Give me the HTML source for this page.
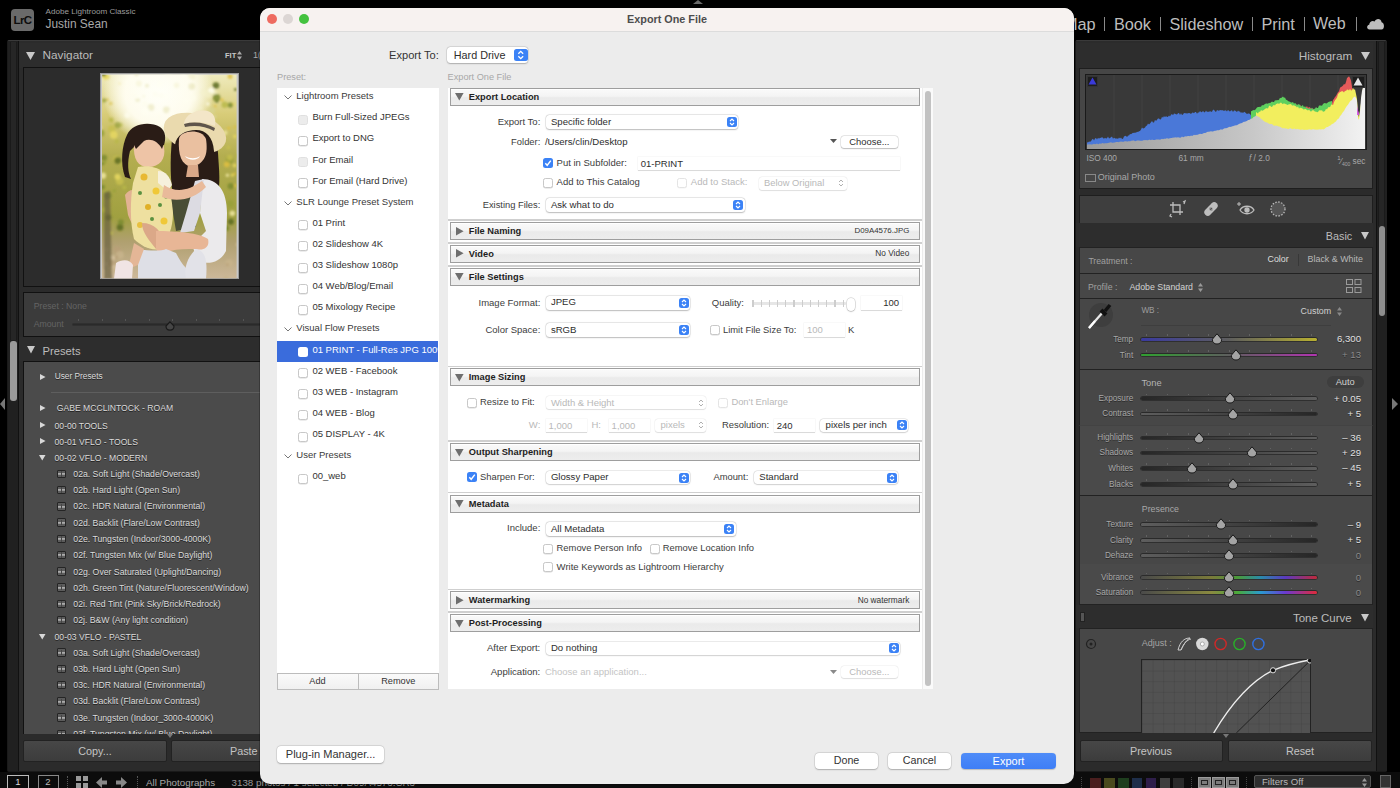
<!DOCTYPE html>
<html><head><meta charset="utf-8">
<style>
*{margin:0;padding:0;box-sizing:border-box}
html,body{width:1400px;height:788px;overflow:hidden;background:#000;font-family:"Liberation Sans",sans-serif;position:relative}
.a{position:absolute}
.t{position:absolute;white-space:nowrap}
.sh{text-shadow:0 1px 1px rgba(0,0,0,.6)}
</style></head><body>
<div class="a" style="left:11px;top:9px;width:23px;height:22px;background:#6a6a6a;border-radius:4px"></div>
<div class="t" style="left:11.0px;width:23px;text-align:center;top:13.03px;font-size:11.5px;line-height:14.95px;color:#0e0e0e;font-weight:bold;letter-spacing:-0.6px">LrC</div>
<div class="t" style="left:45.5px;top:7.43px;font-size:8.1px;line-height:10.53px;color:#9c9c9c;font-weight:normal;">Adobe Lightroom Classic</div>
<div class="t" style="left:45.5px;top:17.27px;font-size:11.9px;line-height:15.47px;color:#a8a8a8;font-weight:normal;">Justin Sean</div>
<div class="t" style="left:1064px;top:13.90px;font-size:16.3px;line-height:21.19px;color:#bdbdbd;font-weight:normal;">Map</div>
<div class="a" style="left:1104.4px;top:17px;width:1px;height:14px;background:#8a8a8a"></div>
<div class="a" style="left:1159.9px;top:17px;width:1px;height:14px;background:#8a8a8a"></div>
<div class="a" style="left:1251.9px;top:17px;width:1px;height:14px;background:#8a8a8a"></div>
<div class="a" style="left:1303.6px;top:17px;width:1px;height:14px;background:#8a8a8a"></div>
<div class="a" style="left:1355.6px;top:17px;width:1px;height:14px;background:#8a8a8a"></div>
<div class="t" style="left:1113.9px;top:13.90px;font-size:16.3px;line-height:21.19px;color:#bdbdbd;font-weight:normal;">Book</div>
<div class="t" style="left:1169.4px;top:13.97px;font-size:16.2px;line-height:21.06px;color:#bdbdbd;font-weight:normal;">Slideshow</div>
<div class="t" style="left:1261.4px;top:13.90px;font-size:16.3px;line-height:21.19px;color:#bdbdbd;font-weight:normal;">Print</div>
<div class="t" style="left:1313px;top:14.10px;font-size:16.0px;line-height:20.8px;color:#bdbdbd;font-weight:normal;">Web</div>
<svg class="a" style="left:1366px;top:17px" width="19" height="13" viewBox="0 0 19 13"><path d="M3.5 12.5 C0.5 12.5 0.3 8.2 3.2 7.8 C3.4 4.6 6.6 3.2 8.6 4.6 C9.8 1 15 1 15.6 5.2 C18.6 5.6 19 12.5 15.5 12.5 Z" fill="#bdbdbd"/></svg>
<svg class="a" style="left:693px;top:0px" width="10" height="4"><path d="M0 4 L5 0 L10 4Z" fill="#6a6a6a"/></svg>
<div class="a" style="left:7px;top:40px;width:264px;height:732px;background:#2b2b2b;border:1px solid #1a1a1a;border-top-color:#3a3a3a;border-radius:2px"></div>
<div class="a" style="left:8px;top:41px;width:11px;height:730px;background:#202020;border-right:1px solid #111"></div>
<div class="a" style="left:10px;top:42px;width:7px;height:298px;background:#262626;border-left:1px solid #1a1a1a;border-right:1px solid #1a1a1a"></div>
<div class="a" style="left:10px;top:341px;width:7px;height:60px;background:#9a9a9a;border-radius:3px"></div>
<svg class="a" style="left:0px;top:398px" width="5" height="12"><path d="M5 0 L0 6 L5 12Z" fill="#777"/></svg>
<div class="a" style="left:19px;top:43px;width:252px;height:25px;background:#2d2d2d"></div>
<svg class="a" style="left:26px;top:52px" width="9" height="8"><path d="M0 0 L9 0 L4.5 8Z" fill="#c8c8c8"/></svg>
<div class="t" style="left:42.5px;top:48.33px;font-size:11.8px;line-height:15.34px;color:#bcbcbc;font-weight:normal;">Navigator</div>
<div class="t" style="left:225px;top:50.92px;font-size:7.5px;line-height:9.75px;color:#c8c8c8;font-weight:bold;">FIT</div>
<svg class="a" style="left:237px;top:51px" width="5" height="9"><path d="M0 3.5 L2.5 0 L5 3.5Z M0 5.5 L2.5 9 L5 5.5Z" fill="#aaa"/></svg>
<div class="t" style="left:253px;top:50.15px;font-size:9px;line-height:11.7px;color:#aaa;font-weight:normal;">1(</div>
<div class="a" style="left:23px;top:67px;width:248px;height:220px;background:#2c2c2c;border:1px solid #111;border-right:none"></div>
<svg class="a" style="left:100px;top:73px" width="139" height="206" viewBox="0 0 139 206">
<defs>
<linearGradient id="pbg" x1="0" y1="0" x2="0" y2="1">
<stop offset="0" stop-color="#f0ecc0"/><stop offset="0.2" stop-color="#d8cc78"/><stop offset="0.4" stop-color="#b4ae50"/><stop offset="0.7" stop-color="#a0a040"/><stop offset="0.82" stop-color="#b0a070"/><stop offset="1" stop-color="#cdb89a"/></linearGradient>
<radialGradient id="pglow" cx="0.42" cy="0.1" r="0.4" gradientTransform="translate(0.42 0.1) scale(1 0.62) translate(-0.42 -0.1)"><stop offset="0" stop-color="#fffff8"/><stop offset="0.6" stop-color="#fffdf0" stop-opacity="0.95"/><stop offset="1" stop-color="#fffcec" stop-opacity="0"/></radialGradient>
<filter id="pb" x="-5%" y="-5%" width="110%" height="110%"><feGaussianBlur stdDeviation="0.6"/></filter>
<filter id="pb2"><feGaussianBlur stdDeviation="0.9"/></filter>
<clipPath id="pc"><rect x="2" y="1.8" width="134.6" height="203.4"/></clipPath>
</defs>
<rect x="0" y="0" width="139" height="206" fill="#9c9c9c"/>
<rect x="1" y="1" width="137" height="204" fill="#c8c8c8"/>
<g clip-path="url(#pc)">
<rect x="0" y="0" width="139" height="206" fill="url(#pbg)"/>
<rect x="0" y="0" width="139" height="206" fill="url(#pglow)"/>
<g filter="url(#pb2)"><circle cx="45.0" cy="31.1" r="3.0" fill="#fdfbe8" opacity="0.85"/><circle cx="114.2" cy="19.4" r="2.8" fill="#f0ecc0" opacity="0.85"/><circle cx="5.2" cy="89.3" r="1.4" fill="#98a038" opacity="0.85"/><circle cx="76.6" cy="12.2" r="2.8" fill="#f0ecc0" opacity="0.85"/><circle cx="8.6" cy="120.6" r="1.3" fill="#e8d860" opacity="0.85"/><circle cx="6.5" cy="176.8" r="2.0" fill="#c8b48c" opacity="0.85"/><circle cx="14.3" cy="117.7" r="1.7" fill="#98a038" opacity="0.85"/><circle cx="76.1" cy="12.9" r="1.4" fill="#f0ecc0" opacity="0.85"/><circle cx="128.4" cy="74.5" r="1.9" fill="#c8c050" opacity="0.85"/><circle cx="16.4" cy="86.1" r="3.3" fill="#c8c050" opacity="0.85"/><circle cx="129.7" cy="86.9" r="3.9" fill="#98a038" opacity="0.85"/><circle cx="8.4" cy="144.5" r="3.0" fill="#5a6a20" opacity="0.85"/><circle cx="92.9" cy="4.6" r="2.5" fill="#f0ecc0" opacity="0.85"/><circle cx="127.4" cy="102.3" r="1.7" fill="#f0e8a0" opacity="0.85"/><circle cx="133.1" cy="31.1" r="1.7" fill="#e8d860" opacity="0.85"/><circle cx="91.5" cy="2.5" r="3.5" fill="#f0ecc0" opacity="0.85"/><circle cx="36.5" cy="0.8" r="2.4" fill="#d8d490" opacity="0.85"/><circle cx="17.4" cy="177.0" r="3.9" fill="#b8a078" opacity="0.85"/><circle cx="132.3" cy="140.2" r="2.8" fill="#f0e8a0" opacity="0.85"/><circle cx="55.5" cy="21.3" r="3.0" fill="#fdfbe8" opacity="0.85"/><circle cx="61.2" cy="22.6" r="2.9" fill="#fdfbe8" opacity="0.85"/><circle cx="0.0" cy="31.2" r="1.5" fill="#b8b848" opacity="0.85"/><circle cx="85.3" cy="14.5" r="1.8" fill="#fffff0" opacity="0.85"/><circle cx="20.6" cy="52.0" r="2.2" fill="#b8b848" opacity="0.85"/><circle cx="65.9" cy="23.8" r="2.6" fill="#fffff0" opacity="0.85"/><circle cx="20.0" cy="154.4" r="3.3" fill="#5a6a20" opacity="0.85"/><circle cx="115.2" cy="33.3" r="1.3" fill="#e0c040" opacity="0.85"/><circle cx="127.1" cy="156.2" r="2.0" fill="#98a038" opacity="0.85"/><circle cx="51.0" cy="34.4" r="3.4" fill="#d8d490" opacity="0.85"/><circle cx="135.5" cy="16.6" r="1.5" fill="#5a6a20" opacity="0.85"/><circle cx="27.3" cy="42.1" r="2.9" fill="#fdfbe8" opacity="0.85"/><circle cx="111.2" cy="17.5" r="3.0" fill="#fffff0" opacity="0.85"/><circle cx="66.4" cy="36.8" r="3.4" fill="#d8d490" opacity="0.85"/><circle cx="12.1" cy="194.9" r="3.2" fill="#d8c4a0" opacity="0.85"/><circle cx="100.7" cy="35.0" r="1.6" fill="#f0ecc0" opacity="0.85"/><circle cx="130.3" cy="32.1" r="2.7" fill="#7a8a30" opacity="0.85"/><circle cx="2.0" cy="200.0" r="3.0" fill="#c8b48c" opacity="0.85"/><circle cx="114.8" cy="43.5" r="1.9" fill="#d8d490" opacity="0.85"/><circle cx="116.0" cy="12.5" r="3.3" fill="#5a6a20" opacity="0.85"/><circle cx="122.1" cy="26.9" r="1.6" fill="#e0c040" opacity="0.85"/><circle cx="2.6" cy="90.7" r="1.7" fill="#7a8a30" opacity="0.85"/><circle cx="107.9" cy="30.9" r="1.6" fill="#fdfbe8" opacity="0.85"/><circle cx="109.0" cy="21.9" r="2.8" fill="#f0ecc0" opacity="0.85"/><circle cx="26.6" cy="8.7" r="1.5" fill="#fffff0" opacity="0.85"/><circle cx="126.8" cy="91.3" r="2.9" fill="#e0c040" opacity="0.85"/><circle cx="84.3" cy="41.1" r="2.0" fill="#fffff0" opacity="0.85"/><circle cx="129.0" cy="190.1" r="3.7" fill="#c8b48c" opacity="0.85"/><circle cx="116.8" cy="28.2" r="1.5" fill="#5a6a20" opacity="0.85"/><circle cx="59.5" cy="43.8" r="2.0" fill="#fdfbe8" opacity="0.85"/><circle cx="124.7" cy="31.8" r="3.2" fill="#b8b848" opacity="0.85"/><circle cx="19.9" cy="181.9" r="3.9" fill="#c8b48c" opacity="0.85"/><circle cx="103.8" cy="19.4" r="3.7" fill="#f0ecc0" opacity="0.85"/><circle cx="137.6" cy="171.5" r="1.7" fill="#d8c4a0" opacity="0.85"/><circle cx="138.2" cy="83.2" r="2.4" fill="#b8b848" opacity="0.85"/><circle cx="2.7" cy="114.1" r="2.4" fill="#7a8a30" opacity="0.85"/><circle cx="15.7" cy="189.2" r="1.8" fill="#b8a078" opacity="0.85"/><circle cx="11.7" cy="56.0" r="3.7" fill="#c8c050" opacity="0.85"/><circle cx="37.6" cy="26.7" r="2.4" fill="#d8d490" opacity="0.85"/><circle cx="111.1" cy="37.8" r="3.7" fill="#d8d490" opacity="0.85"/><circle cx="130.4" cy="130.7" r="3.4" fill="#98a038" opacity="0.85"/><circle cx="36.8" cy="25.1" r="1.2" fill="#fffff0" opacity="0.85"/><circle cx="128.8" cy="55.2" r="1.6" fill="#e0c040" opacity="0.85"/><circle cx="134.7" cy="54.0" r="1.7" fill="#d8c048" opacity="0.85"/><circle cx="5.1" cy="3.8" r="2.6" fill="#e8d860" opacity="0.85"/><circle cx="134.9" cy="63.4" r="1.8" fill="#e8d860" opacity="0.85"/><circle cx="7.6" cy="26.7" r="1.4" fill="#d8c048" opacity="0.85"/><circle cx="59.9" cy="11.4" r="3.1" fill="#fffff0" opacity="0.85"/><circle cx="21.9" cy="91.8" r="1.9" fill="#b8b848" opacity="0.85"/><circle cx="135.2" cy="112.7" r="1.9" fill="#d8c048" opacity="0.85"/><circle cx="30.3" cy="37.7" r="2.1" fill="#fdfbe8" opacity="0.85"/><circle cx="0.7" cy="54.4" r="1.5" fill="#f0e8a0" opacity="0.85"/><circle cx="11.7" cy="197.3" r="3.6" fill="#c8b48c" opacity="0.85"/><circle cx="20.8" cy="149.2" r="3.0" fill="#7a8a30" opacity="0.85"/><circle cx="126.5" cy="155.1" r="2.8" fill="#7a8a30" opacity="0.85"/><circle cx="4.3" cy="27.4" r="2.2" fill="#98a038" opacity="0.85"/><circle cx="7.1" cy="3.9" r="2.7" fill="#e8d860" opacity="0.85"/><circle cx="68.0" cy="0.7" r="3.4" fill="#fdfbe8" opacity="0.85"/><circle cx="91.6" cy="13.6" r="3.3" fill="#d8d490" opacity="0.85"/><circle cx="10.7" cy="187.6" r="2.0" fill="#b8a078" opacity="0.85"/><circle cx="10.8" cy="30.4" r="1.9" fill="#d8c048" opacity="0.85"/><circle cx="86.3" cy="27.5" r="2.6" fill="#fffff0" opacity="0.85"/><circle cx="16.5" cy="184.1" r="1.8" fill="#b8a078" opacity="0.85"/><circle cx="130.1" cy="3.6" r="2.5" fill="#e0c040" opacity="0.85"/><circle cx="134.6" cy="92.6" r="2.0" fill="#e8d860" opacity="0.85"/><circle cx="127.4" cy="191.7" r="1.4" fill="#b8a078" opacity="0.85"/><circle cx="19.7" cy="108.0" r="3.9" fill="#c8c050" opacity="0.85"/><circle cx="38.9" cy="23.2" r="2.2" fill="#fffff0" opacity="0.85"/><circle cx="3.5" cy="0.7" r="2.6" fill="#5a6a20" opacity="0.85"/><circle cx="16.8" cy="68.3" r="2.1" fill="#b8b848" opacity="0.85"/><circle cx="116.6" cy="24.7" r="3.8" fill="#7a8a30" opacity="0.85"/><circle cx="125.3" cy="59.7" r="2.2" fill="#f0e8a0" opacity="0.85"/><circle cx="10.6" cy="190.6" r="3.3" fill="#b8a078" opacity="0.85"/><circle cx="39.0" cy="10.6" r="3.1" fill="#f0ecc0" opacity="0.85"/><circle cx="71.0" cy="39.1" r="2.2" fill="#fffff0" opacity="0.85"/><circle cx="130.8" cy="113.1" r="3.2" fill="#7a8a30" opacity="0.85"/><circle cx="129.8" cy="84.6" r="2.9" fill="#c8c050" opacity="0.85"/><circle cx="6.8" cy="190.9" r="1.6" fill="#d8c4a0" opacity="0.85"/><circle cx="93.0" cy="24.7" r="3.0" fill="#fdfbe8" opacity="0.85"/><circle cx="126.0" cy="205.3" r="2.5" fill="#c8b48c" opacity="0.85"/><circle cx="24.3" cy="114.5" r="2.1" fill="#b8b848" opacity="0.85"/><circle cx="47.0" cy="12.8" r="2.0" fill="#d8d490" opacity="0.85"/><circle cx="17.5" cy="103.7" r="3.0" fill="#e8d860" opacity="0.85"/><circle cx="12.9" cy="184.7" r="2.3" fill="#d8c4a0" opacity="0.85"/><circle cx="17.7" cy="87.6" r="3.3" fill="#5a6a20" opacity="0.85"/><circle cx="134.6" cy="100.9" r="1.4" fill="#e0c040" opacity="0.85"/><circle cx="34.5" cy="22.5" r="1.6" fill="#fdfbe8" opacity="0.85"/><circle cx="130.9" cy="148.7" r="3.0" fill="#5a6a20" opacity="0.85"/><circle cx="11.8" cy="160.0" r="1.2" fill="#c8c050" opacity="0.85"/><circle cx="17.8" cy="51.9" r="3.0" fill="#98a038" opacity="0.85"/><circle cx="13.8" cy="61.9" r="3.8" fill="#e8d860" opacity="0.85"/><circle cx="83.5" cy="2.2" r="2.0" fill="#fffff0" opacity="0.85"/><circle cx="4.1" cy="84.8" r="3.0" fill="#7a8a30" opacity="0.85"/><circle cx="3.0" cy="102.7" r="3.1" fill="#f0e8a0" opacity="0.85"/><circle cx="11.3" cy="46.9" r="2.4" fill="#b8b848" opacity="0.85"/><circle cx="31.5" cy="7.0" r="2.1" fill="#fffff0" opacity="0.85"/><circle cx="0.9" cy="60.2" r="3.6" fill="#98a038" opacity="0.85"/><circle cx="132.3" cy="102.1" r="1.7" fill="#e8d860" opacity="0.85"/><circle cx="7.8" cy="122.5" r="3.8" fill="#7a8a30" opacity="0.85"/><circle cx="19.7" cy="10.7" r="1.4" fill="#f0e8a0" opacity="0.85"/><circle cx="43.7" cy="23.3" r="1.4" fill="#f0ecc0" opacity="0.85"/><circle cx="45.8" cy="38.2" r="3.8" fill="#fffff0" opacity="0.85"/><circle cx="4.4" cy="136.9" r="2.3" fill="#b8b848" opacity="0.85"/>
<path d="M4 120 L10 118 L12 206 L4 206Z" fill="#6a6040" opacity="0.7"/>
</g>
<rect x="0" y="0" width="139" height="206" fill="url(#pglow)" opacity="0.6"/>
<g filter="url(#pb)">
<!-- woman hair back -->
<path d="M72 66 C72 56 84 52 96 52 C110 53 117 62 118 80 C119 98 121 110 117 126 L100 130 L74 126 C70 110 70 86 72 66Z" fill="#2a1c17"/>
<!-- hat brim -->
<ellipse cx="95" cy="60" rx="32" ry="19" fill="#eadaae" transform="rotate(16 95 60)"/>
<path d="M84 50 C86 40 100 35 110 39 C115 42 116 47 115 53 C105 49 94 48 84 51Z" fill="#f3e6c8"/>
<path d="M84 51 C95 48 106 50 115 55 L114 58 C105 53 95 52 85 54Z" fill="#5e544c"/>
<!-- hair in front of brim -->
<path d="M75 72 C76 62 86 57 96 57 C106 57 113 64 114 78 C115 96 118 110 115 124 L96 120 L77 124 C73 108 73 88 75 72Z" fill="#2a1c17"/>
<!-- woman face -->
<path d="M79 66 C80 57 102 55 106 66 C108 80 106 90 92 94 C81 92 78 82 79 66Z" fill="#eac0a0"/>
<path d="M85 83 C90 86 96 86 100 83 C98 88 88 88 85 83Z" fill="#fff"/>
<path d="M88 92 L98 92 L99 104 L86 104Z" fill="#d9a888"/>
<!-- girl ponytail & hair -->
<path d="M27 62 C32 50 50 48 60 54 C66 58 66 66 64 72 L36 72 L30 78 C27 90 28 100 31 106 L25 104 C20 90 22 72 27 62Z" fill="#2c1e18"/>
<!-- girl face -->
<path d="M34 72 C38 62 60 62 64 74 C66 86 60 94 48 94 C38 94 33 86 34 72Z" fill="#eec4a6"/>
<path d="M33 70 C38 58 58 56 64 70 L62 76 C58 68 50 65 44 68 L36 76Z" fill="#2c1e18"/>
<!-- green top -->
<path d="M70 122 C80 118 92 118 98 112 L96 154 L76 158Z" fill="#4a4e36"/>
<!-- woman cardigan right -->
<path d="M102 106 C118 106 127 118 127 140 L126 178 C120 190 108 192 98 188 L92 172 L106 158 L100 140Z" fill="#ebeaec"/>
<path d="M95 108 L104 106 L100 140 L94 158 L80 160 L86 140Z" fill="#dcdbe2"/>
<!-- woman arm left side -->
<path d="M25 122 C32 112 40 118 44 130 C48 145 56 160 66 166 L62 178 C48 174 34 158 28 142Z" fill="#e2b292"/>
<!-- girl dress -->
<path d="M38 94 C48 92 60 94 66 102 C70 114 72 128 73 140 C73 154 68 168 60 176 C50 178 40 172 34 166 C30 150 30 128 33 110Z" fill="#eee0a0"/>
<path d="M58 98 C66 98 70 104 72 112 L68 118 L58 110Z" fill="#f6f0dc"/>
<circle cx="44" cy="104" r="3.5" fill="#e8b830"/><circle cx="56" cy="118" r="3.5" fill="#f0c838"/><circle cx="48" cy="134" r="3" fill="#e0b028"/><circle cx="64" cy="148" r="3.5" fill="#f0c838"/><circle cx="40" cy="152" r="3" fill="#e8c040"/><circle cx="52" cy="162" r="3" fill="#f4d860"/>
<circle cx="40" cy="120" r="2" fill="#5a9040"/><circle cx="60" cy="132" r="2" fill="#5a9040"/><circle cx="52" cy="146" r="2" fill="#5a9040"/><circle cx="66" cy="124" r="1.8" fill="#6aa050"/>
<!-- girl arm -->
<path d="M64 112 C76 120 88 118 102 108 L106 114 C94 126 78 130 62 124Z" fill="#e9ba9a"/>
<!-- woman hand -->
<path d="M42 150 C54 150 62 158 66 172 L56 176 C50 168 42 160 42 150Z" fill="#dba888"/>
<!-- girl leg -->
<path d="M56 158 C76 158 100 160 108 166 C110 174 104 178 96 176 C86 176 78 176 70 178 C76 186 80 196 78 206 L60 206 C64 192 60 182 56 176Z" fill="#e8b696"/>
<!-- white lace skirt -->
<path d="M38 176 C50 178 62 178 66 176 L76 180 C82 192 88 200 104 206 L38 206Z" fill="#dedfe6"/>
<path d="M96 176 C104 178 108 184 106 206 L86 206 C84 196 86 186 96 176Z" fill="#e2e2e8"/>
<!-- girl lower leg & shoe -->
<path d="M34 170 L44 176 L38 192 L28 196Z" fill="#e4b696"/>
<path d="M16 190 C22 186 30 186 33 192 L32 206 L14 206Z" fill="#f0e4e4"/>
</g>
</g>
</svg>
<div class="a" style="left:23px;top:292px;width:248px;height:45px;background:#3b3b3b;border:1px solid #111;border-right:none"></div>
<div class="t" style="left:33.7px;top:300.95px;font-size:8.7px;line-height:11.31px;color:#646464;font-weight:normal;">Preset : None</div>
<div class="t" style="left:33.7px;top:318.75px;font-size:8.7px;line-height:11.31px;color:#646464;font-weight:normal;">Amount</div>
<div class="a" style="left:72px;top:323px;width:199px;height:3px;background:#2a2a2a;border-radius:2px;border:1px solid #303030"></div>
<div class="a" style="left:78.0px;top:319px;width:1px;height:2px;background:#555"></div>
<div class="a" style="left:101.5px;top:319px;width:1px;height:2px;background:#555"></div>
<div class="a" style="left:125.0px;top:319px;width:1px;height:2px;background:#555"></div>
<div class="a" style="left:148.5px;top:319px;width:1px;height:2px;background:#555"></div>
<div class="a" style="left:172.0px;top:319px;width:1px;height:2px;background:#555"></div>
<div class="a" style="left:195.5px;top:319px;width:1px;height:2px;background:#555"></div>
<div class="a" style="left:219.0px;top:319px;width:1px;height:2px;background:#555"></div>
<div class="a" style="left:242.5px;top:319px;width:1px;height:2px;background:#555"></div>
<svg class="a" style="left:164.5px;top:320.5px" width="10" height="10"><path d="M5 0.8 L9 5 C9 8 7.5 9.2 5 9.2 C2.5 9.2 1 8 1 5Z" fill="#464646" stroke="#1a1a1a" stroke-width="1.2"/></svg>
<div class="a" style="left:19px;top:337px;width:252px;height:24px;background:#2d2d2d"></div>
<svg class="a" style="left:26.5px;top:346px" width="8" height="8"><path d="M0 0 L8 0 L4 7.5Z" fill="#c8c8c8"/></svg>
<div class="t" style="left:42.6px;top:343.72px;font-size:11.2px;line-height:14.56px;color:#bcbcbc;font-weight:normal;">Presets</div>
<div class="a" style="left:23px;top:361px;width:248px;height:373px;background:#4b4b4b;border:1px solid #111;border-right:none;border-bottom:none"></div>
<svg class="a" style="left:39.5px;top:373.8px" width="6" height="7"><path d="M0 0 L5.5 3 L0 6Z" fill="#d8d8d8"/></svg>
<div class="t" style="left:54.7px;top:371.41px;font-size:8.3px;line-height:10.79px;color:#dcdcdc;font-weight:normal;text-shadow:0 1px 0 #222">User Presets</div>
<div class="a" style="left:51px;top:392px;width:220px;height:1px;background:#5e5e5e"></div>
<svg class="a" style="left:39.5px;top:405px" width="6" height="7"><path d="M0 0 L5.5 3 L0 6Z" fill="#d8d8d8"/></svg>
<div class="t" style="left:56.8px;top:403.21px;font-size:8.6px;line-height:11.18px;color:#dcdcdc;font-weight:normal;text-shadow:0 1px 0 #222">GABE MCCLINTOCK - ROAM</div>
<svg class="a" style="left:39.5px;top:422.3px" width="6" height="7"><path d="M0 0 L5.5 3 L0 6Z" fill="#d8d8d8"/></svg>
<div class="t" style="left:54.6px;top:420.51px;font-size:8.6px;line-height:11.18px;color:#dcdcdc;font-weight:normal;text-shadow:0 1px 0 #222">00-00 TOOLS</div>
<svg class="a" style="left:39.5px;top:438.3px" width="6" height="7"><path d="M0 0 L5.5 3 L0 6Z" fill="#d8d8d8"/></svg>
<div class="t" style="left:54.6px;top:436.51px;font-size:8.6px;line-height:11.18px;color:#dcdcdc;font-weight:normal;text-shadow:0 1px 0 #222">00-01 VFLO - TOOLS</div>
<svg class="a" style="left:39px;top:454.8px" width="7" height="6"><path d="M0 0 L6.5 0 L3.25 5.5Z" fill="#d8d8d8"/></svg>
<div class="t" style="left:54.6px;top:452.51px;font-size:8.6px;line-height:11.18px;color:#dcdcdc;font-weight:normal;text-shadow:0 1px 0 #222">00-02 VFLO - MODERN</div>
<div class="a" style="left:56.5px;top:469.5px;width:9.5px;height:8.5px;border:1px solid #252525;border-radius:1px;background:#5c5c5c"><div class="a" style="left:0.5px;top:2.5px;width:6.5px;height:2px;border-top:1px solid #aaa;border-bottom:1px solid #999"></div><div class="a" style="left:3px;top:0.5px;width:1px;height:5.5px;background:#444"></div></div>
<div class="t" style="left:73.3px;top:468.95px;font-size:8.7px;line-height:11.31px;color:#dcdcdc;font-weight:normal;text-shadow:0 1px 0 #222">02a. Soft Light (Shade/Overcast)</div>
<div class="a" style="left:56.5px;top:485.8px;width:9.5px;height:8.5px;border:1px solid #252525;border-radius:1px;background:#5c5c5c"><div class="a" style="left:0.5px;top:2.5px;width:6.5px;height:2px;border-top:1px solid #aaa;border-bottom:1px solid #999"></div><div class="a" style="left:3px;top:0.5px;width:1px;height:5.5px;background:#444"></div></div>
<div class="t" style="left:73.3px;top:485.22px;font-size:8.7px;line-height:11.31px;color:#dcdcdc;font-weight:normal;text-shadow:0 1px 0 #222">02b. Hard Light (Open Sun)</div>
<div class="a" style="left:56.5px;top:502.0px;width:9.5px;height:8.5px;border:1px solid #252525;border-radius:1px;background:#5c5c5c"><div class="a" style="left:0.5px;top:2.5px;width:6.5px;height:2px;border-top:1px solid #aaa;border-bottom:1px solid #999"></div><div class="a" style="left:3px;top:0.5px;width:1px;height:5.5px;background:#444"></div></div>
<div class="t" style="left:73.3px;top:501.49px;font-size:8.7px;line-height:11.31px;color:#dcdcdc;font-weight:normal;text-shadow:0 1px 0 #222">02c. HDR Natural (Environmental)</div>
<div class="a" style="left:56.5px;top:518.3px;width:9.5px;height:8.5px;border:1px solid #252525;border-radius:1px;background:#5c5c5c"><div class="a" style="left:0.5px;top:2.5px;width:6.5px;height:2px;border-top:1px solid #aaa;border-bottom:1px solid #999"></div><div class="a" style="left:3px;top:0.5px;width:1px;height:5.5px;background:#444"></div></div>
<div class="t" style="left:73.3px;top:517.75px;font-size:8.7px;line-height:11.31px;color:#dcdcdc;font-weight:normal;text-shadow:0 1px 0 #222">02d. Backlit (Flare/Low Contrast)</div>
<div class="a" style="left:56.5px;top:534.6px;width:9.5px;height:8.5px;border:1px solid #252525;border-radius:1px;background:#5c5c5c"><div class="a" style="left:0.5px;top:2.5px;width:6.5px;height:2px;border-top:1px solid #aaa;border-bottom:1px solid #999"></div><div class="a" style="left:3px;top:0.5px;width:1px;height:5.5px;background:#444"></div></div>
<div class="t" style="left:73.3px;top:534.02px;font-size:8.7px;line-height:11.31px;color:#dcdcdc;font-weight:normal;text-shadow:0 1px 0 #222">02e. Tungsten (Indoor/3000-4000K)</div>
<div class="a" style="left:56.5px;top:550.9px;width:9.5px;height:8.5px;border:1px solid #252525;border-radius:1px;background:#5c5c5c"><div class="a" style="left:0.5px;top:2.5px;width:6.5px;height:2px;border-top:1px solid #aaa;border-bottom:1px solid #999"></div><div class="a" style="left:3px;top:0.5px;width:1px;height:5.5px;background:#444"></div></div>
<div class="t" style="left:73.3px;top:550.29px;font-size:8.7px;line-height:11.31px;color:#dcdcdc;font-weight:normal;text-shadow:0 1px 0 #222">02f. Tungsten Mix (w/ Blue Daylight)</div>
<div class="a" style="left:56.5px;top:567.1px;width:9.5px;height:8.5px;border:1px solid #252525;border-radius:1px;background:#5c5c5c"><div class="a" style="left:0.5px;top:2.5px;width:6.5px;height:2px;border-top:1px solid #aaa;border-bottom:1px solid #999"></div><div class="a" style="left:3px;top:0.5px;width:1px;height:5.5px;background:#444"></div></div>
<div class="t" style="left:73.3px;top:566.56px;font-size:8.7px;line-height:11.31px;color:#dcdcdc;font-weight:normal;text-shadow:0 1px 0 #222">02g. Over Saturated (Uplight/Dancing)</div>
<div class="a" style="left:56.5px;top:583.4px;width:9.5px;height:8.5px;border:1px solid #252525;border-radius:1px;background:#5c5c5c"><div class="a" style="left:0.5px;top:2.5px;width:6.5px;height:2px;border-top:1px solid #aaa;border-bottom:1px solid #999"></div><div class="a" style="left:3px;top:0.5px;width:1px;height:5.5px;background:#444"></div></div>
<div class="t" style="left:73.3px;top:582.83px;font-size:8.7px;line-height:11.31px;color:#dcdcdc;font-weight:normal;text-shadow:0 1px 0 #222">02h. Green Tint (Nature/Fluorescent/Window)</div>
<div class="a" style="left:56.5px;top:599.7px;width:9.5px;height:8.5px;border:1px solid #252525;border-radius:1px;background:#5c5c5c"><div class="a" style="left:0.5px;top:2.5px;width:6.5px;height:2px;border-top:1px solid #aaa;border-bottom:1px solid #999"></div><div class="a" style="left:3px;top:0.5px;width:1px;height:5.5px;background:#444"></div></div>
<div class="t" style="left:73.3px;top:599.10px;font-size:8.7px;line-height:11.31px;color:#dcdcdc;font-weight:normal;text-shadow:0 1px 0 #222">02i. Red Tint (Pink Sky/Brick/Redrock)</div>
<div class="a" style="left:56.5px;top:615.9px;width:9.5px;height:8.5px;border:1px solid #252525;border-radius:1px;background:#5c5c5c"><div class="a" style="left:0.5px;top:2.5px;width:6.5px;height:2px;border-top:1px solid #aaa;border-bottom:1px solid #999"></div><div class="a" style="left:3px;top:0.5px;width:1px;height:5.5px;background:#444"></div></div>
<div class="t" style="left:73.3px;top:615.37px;font-size:8.7px;line-height:11.31px;color:#dcdcdc;font-weight:normal;text-shadow:0 1px 0 #222">02j. B&amp;W (Any light condition)</div>
<svg class="a" style="left:39px;top:634.1px" width="7" height="6"><path d="M0 0 L6.5 0 L3.25 5.5Z" fill="#d8d8d8"/></svg>
<div class="t" style="left:54.6px;top:631.81px;font-size:8.6px;line-height:11.18px;color:#dcdcdc;font-weight:normal;text-shadow:0 1px 0 #222">00-03 VFLO - PASTEL</div>
<div class="a" style="left:56.5px;top:648.2px;width:9.5px;height:8.5px;border:1px solid #252525;border-radius:1px;background:#5c5c5c"><div class="a" style="left:0.5px;top:2.5px;width:6.5px;height:2px;border-top:1px solid #aaa;border-bottom:1px solid #999"></div><div class="a" style="left:3px;top:0.5px;width:1px;height:5.5px;background:#444"></div></div>
<div class="t" style="left:73.3px;top:647.64px;font-size:8.7px;line-height:11.31px;color:#dcdcdc;font-weight:normal;text-shadow:0 1px 0 #222">03a. Soft Light (Shade/Overcast)</div>
<div class="a" style="left:56.5px;top:664.5px;width:9.5px;height:8.5px;border:1px solid #252525;border-radius:1px;background:#5c5c5c"><div class="a" style="left:0.5px;top:2.5px;width:6.5px;height:2px;border-top:1px solid #aaa;border-bottom:1px solid #999"></div><div class="a" style="left:3px;top:0.5px;width:1px;height:5.5px;background:#444"></div></div>
<div class="t" style="left:73.3px;top:663.91px;font-size:8.7px;line-height:11.31px;color:#dcdcdc;font-weight:normal;text-shadow:0 1px 0 #222">03b. Hard Light (Open Sun)</div>
<div class="a" style="left:56.5px;top:680.7px;width:9.5px;height:8.5px;border:1px solid #252525;border-radius:1px;background:#5c5c5c"><div class="a" style="left:0.5px;top:2.5px;width:6.5px;height:2px;border-top:1px solid #aaa;border-bottom:1px solid #999"></div><div class="a" style="left:3px;top:0.5px;width:1px;height:5.5px;background:#444"></div></div>
<div class="t" style="left:73.3px;top:680.18px;font-size:8.7px;line-height:11.31px;color:#dcdcdc;font-weight:normal;text-shadow:0 1px 0 #222">03c. HDR Natural (Environmental)</div>
<div class="a" style="left:56.5px;top:697.0px;width:9.5px;height:8.5px;border:1px solid #252525;border-radius:1px;background:#5c5c5c"><div class="a" style="left:0.5px;top:2.5px;width:6.5px;height:2px;border-top:1px solid #aaa;border-bottom:1px solid #999"></div><div class="a" style="left:3px;top:0.5px;width:1px;height:5.5px;background:#444"></div></div>
<div class="t" style="left:73.3px;top:696.45px;font-size:8.7px;line-height:11.31px;color:#dcdcdc;font-weight:normal;text-shadow:0 1px 0 #222">03d. Backlit (Flare/Low Contrast)</div>
<div class="a" style="left:56.5px;top:713.3px;width:9.5px;height:8.5px;border:1px solid #252525;border-radius:1px;background:#5c5c5c"><div class="a" style="left:0.5px;top:2.5px;width:6.5px;height:2px;border-top:1px solid #aaa;border-bottom:1px solid #999"></div><div class="a" style="left:3px;top:0.5px;width:1px;height:5.5px;background:#444"></div></div>
<div class="t" style="left:73.3px;top:712.72px;font-size:8.7px;line-height:11.31px;color:#dcdcdc;font-weight:normal;text-shadow:0 1px 0 #222">03e. Tungsten (Indoor_3000-4000K)</div>
<div class="a" style="left:56.5px;top:729.5px;width:9.5px;height:8.5px;border:1px solid #252525;border-radius:1px;background:#5c5c5c"><div class="a" style="left:0.5px;top:2.5px;width:6.5px;height:2px;border-top:1px solid #aaa;border-bottom:1px solid #999"></div><div class="a" style="left:3px;top:0.5px;width:1px;height:5.5px;background:#444"></div></div>
<div class="t" style="left:73.3px;top:728.99px;font-size:8.7px;line-height:11.31px;color:#dcdcdc;font-weight:normal;text-shadow:0 1px 0 #222">03f. Tungsten Mix (w/ Blue Daylight)</div>
<div class="a" style="left:19px;top:734px;width:252px;height:36px;background:#2b2b2b"></div>
<svg class="a" style="left:167px;top:734px" width="6" height="4"><path d="M0 0 L6 0 L3 4Z" fill="#777"/></svg>
<div class="a" style="left:23px;top:740px;width:144px;height:22px;background:linear-gradient(#474747,#3c3c3c);border:1px solid #222;border-radius:2px"></div>
<div class="t" style="left:23.0px;width:144px;text-align:center;top:743.98px;font-size:10.8px;line-height:14.04px;color:#c4c4c4;font-weight:normal;">Copy...</div>
<div class="a" style="left:171px;top:740px;width:100px;height:22px;background:linear-gradient(#474747,#3c3c3c);border:1px solid #222;border-radius:2px"></div>
<div class="t" style="left:230px;top:743.98px;font-size:10.8px;line-height:14.04px;color:#c4c4c4;font-weight:normal;">Paste</div>
<div class="a" style="left:0px;top:772px;width:1400px;height:16px;background:#0c0c0c"></div>
<div class="a" style="left:7px;top:775px;width:22px;height:13px;border:1px solid #bbb;border-bottom:none"></div>
<div class="t" style="left:7.0px;width:22px;text-align:center;top:775.83px;font-size:9.5px;line-height:12.35px;color:#ddd;font-weight:normal;">1</div>
<div class="a" style="left:37.5px;top:775px;width:21px;height:13px;border:1px solid #888;border-bottom:none"></div>
<div class="t" style="left:37.5px;width:21px;text-align:center;top:775.83px;font-size:9.5px;line-height:12.35px;color:#bbb;font-weight:normal;">2</div>
<div class="a" style="left:67px;top:776px;width:1px;height:12px;border-left:1px dotted #555"></div>
<svg class="a" style="left:76px;top:776px" width="14" height="12"><rect x="0" y="0" width="5" height="5" fill="#999"/><rect x="7" y="0" width="5" height="5" fill="#999"/><rect x="0" y="7" width="5" height="5" fill="#999"/><rect x="7" y="7" width="5" height="5" fill="#999"/></svg>
<svg class="a" style="left:96px;top:777px" width="32" height="11"><path d="M0 5.5 L6 0 L6 3.5 L11 3.5 L11 7.5 L6 7.5 L6 11Z M31 5.5 L25 0 L25 3.5 L20 3.5 L20 7.5 L25 7.5 L25 11Z" fill="#888"/></svg>
<div class="a" style="left:137px;top:776px;width:1px;height:12px;border-left:1px dotted #555"></div>
<div class="t" style="left:146px;top:776.63px;font-size:9.8px;line-height:12.74px;color:#a8a8a8;font-weight:normal;">All Photographs</div>
<div class="t" style="left:231.5px;top:776.63px;font-size:9.8px;line-height:12.74px;color:#999;font-weight:normal;">3138 photos / 1 selected / D09A4576.CR3</div>
<div class="a" style="left:1075px;top:40px;width:312px;height:732px;background:#2b2b2b;border:1px solid #1a1a1a;border-top-color:#3a3a3a;border-radius:2px"></div>
<div class="a" style="left:1076px;top:43px;width:297px;height:25px;background:#2d2d2d"></div>
<div class="t" style="left:1252.4px;width:100px;text-align:right;top:48.83px;font-size:11.8px;line-height:15.34px;color:#bcbcbc;font-weight:normal;">Histogram</div>
<svg class="a" style="left:1360.7px;top:52px" width="9" height="8"><path d="M0 0 L9 0 L4.5 8Z" fill="#c8c8c8"/></svg>
<div class="a" style="left:1376px;top:41px;width:11px;height:730px;background:#202020;border-left:1px solid #111"></div>
<div class="a" style="left:1378px;top:42px;width:7px;height:184px;background:#262626;border-left:1px solid #1a1a1a;border-right:1px solid #1a1a1a"></div>
<div class="a" style="left:1379px;top:226px;width:6px;height:90px;background:#8e8e8e;border-radius:3px"></div>
<svg class="a" style="left:1392px;top:398px" width="6" height="12"><path d="M0 0 L6 6 L0 12Z" fill="#777"/></svg>
<div class="a" style="left:1079px;top:68px;width:294px;height:121px;background:#464646;border:1px solid #1e1e1e"></div>
<div class="a" style="left:1085px;top:74px;width:282px;height:76px;background:#393939;border:1px solid #1a1a1a"></div>
<svg class="a" style="left:1086px;top:75px" width="280" height="74" viewBox="0 0 280 74"><line x1="28" y1="0" x2="28" y2="74" stroke="#424242" stroke-width="1"/><line x1="56" y1="0" x2="56" y2="74" stroke="#424242" stroke-width="1"/><line x1="84" y1="0" x2="84" y2="74" stroke="#424242" stroke-width="1"/><line x1="112" y1="0" x2="112" y2="74" stroke="#424242" stroke-width="1"/><line x1="140" y1="0" x2="140" y2="74" stroke="#424242" stroke-width="1"/><line x1="168" y1="0" x2="168" y2="74" stroke="#424242" stroke-width="1"/><line x1="196" y1="0" x2="196" y2="74" stroke="#424242" stroke-width="1"/><line x1="224" y1="0" x2="224" y2="74" stroke="#424242" stroke-width="1"/><line x1="252" y1="0" x2="252" y2="74" stroke="#424242" stroke-width="1"/><defs><linearGradient id="hg" x1="0" y1="0" x2="1" y2="0"><stop offset="0" stop-color="#9a9a9a"/><stop offset="0.6" stop-color="#c8c8c8"/><stop offset="1" stop-color="#f2f2f2"/></linearGradient></defs>
<path d="M1.0 67.2 L2.0 67.5 L3.0 66.6 L4.0 66.7 L5.0 66.3 L6.0 64.4 L7.0 63.8 L8.0 65.5 L9.0 63.6 L10.0 63.0 L11.0 64.6 L12.0 62.7 L13.0 63.7 L14.0 62.7 L15.0 63.1 L16.0 61.9 L17.0 63.1 L18.0 63.7 L19.0 62.8 L20.0 63.4 L21.0 63.2 L22.0 61.6 L23.0 63.5 L24.0 63.0 L25.0 62.3 L26.0 61.6 L27.0 63.7 L28.0 62.7 L29.0 63.3 L30.0 63.8 L31.0 63.3 L32.0 63.9 L33.0 62.5 L34.0 63.6 L35.0 62.6 L36.0 63.9 L37.0 63.8 L38.0 61.5 L39.0 61.1 L40.0 60.8 L41.0 62.3 L42.0 60.4 L43.0 60.4 L44.0 59.1 L45.0 59.2 L46.0 58.4 L47.0 57.8 L48.0 57.9 L49.0 57.4 L50.0 57.8 L51.0 56.7 L52.0 56.9 L53.0 56.2 L54.0 56.0 L55.0 54.5 L56.0 52.5 L57.0 53.6 L58.0 53.2 L59.0 52.4 L60.0 50.9 L61.0 50.6 L62.0 48.6 L63.0 49.6 L64.0 48.4 L65.0 47.2 L66.0 46.1 L67.0 47.6 L68.0 47.5 L69.0 44.7 L70.0 46.1 L71.0 44.7 L72.0 43.6 L73.0 43.6 L74.0 44.4 L75.0 44.3 L76.0 41.7 L77.0 42.8 L78.0 40.9 L79.0 42.3 L80.0 40.9 L81.0 41.9 L82.0 41.8 L83.0 40.4 L84.0 41.6 L85.0 39.7 L86.0 38.9 L87.0 40.2 L88.0 38.5 L89.0 38.8 L90.0 39.3 L91.0 39.6 L92.0 38.3 L93.0 37.9 L94.0 39.9 L95.0 38.3 L96.0 39.9 L97.0 39.6 L98.0 38.1 L99.0 38.2 L100.0 38.2 L101.0 38.4 L102.0 38.2 L103.0 38.1 L104.0 38.2 L105.0 38.9 L106.0 37.8 L107.0 37.5 L108.0 38.2 L109.0 36.9 L110.0 37.0 L111.0 38.7 L112.0 37.4 L113.0 37.4 L114.0 36.0 L115.0 37.0 L116.0 37.3 L117.0 35.8 L118.0 37.3 L119.0 37.2 L120.0 35.6 L121.0 37.0 L122.0 36.5 L123.0 36.9 L124.0 36.0 L125.0 36.8 L126.0 36.8 L127.0 34.8 L128.0 34.8 L129.0 36.3 L130.0 37.0 L131.0 35.0 L132.0 35.4 L133.0 35.8 L134.0 35.1 L135.0 35.2 L136.0 35.2 L137.0 35.3 L138.0 36.0 L139.0 35.2 L140.0 35.5 L141.0 36.6 L142.0 34.7 L143.0 36.1 L144.0 36.6 L145.0 35.5 L146.0 35.3 L147.0 36.9 L148.0 35.4 L149.0 35.4 L150.0 36.2 L151.0 37.0 L152.0 35.6 L153.0 36.4 L154.0 36.5 L155.0 38.0 L156.0 37.1 L157.0 38.3 L158.0 36.7 L159.0 37.3 L160.0 38.3 L161.0 39.0 L162.0 38.5 L163.0 38.5 L164.0 38.9 L165.0 40.6 L166.0 40.3 L167.0 42.6 L168.0 43.3 L169.0 41.4 L170.0 41.3 L171.0 42.4 L172.0 41.7 L172.0 74.0 L171.0 74.0 L170.0 74.0 L169.0 74.0 L168.0 74.0 L167.0 74.0 L166.0 74.0 L165.0 74.0 L164.0 74.0 L163.0 74.0 L162.0 74.0 L161.0 74.0 L160.0 74.0 L159.0 74.0 L158.0 74.0 L157.0 74.0 L156.0 74.0 L155.0 74.0 L154.0 74.0 L153.0 74.0 L152.0 74.0 L151.0 74.0 L150.0 74.0 L149.0 74.0 L148.0 74.0 L147.0 74.0 L146.0 74.0 L145.0 74.0 L144.0 74.0 L143.0 74.0 L142.0 74.0 L141.0 74.0 L140.0 74.0 L139.0 74.0 L138.0 74.0 L137.0 74.0 L136.0 74.0 L135.0 74.0 L134.0 74.0 L133.0 74.0 L132.0 74.0 L131.0 74.0 L130.0 74.0 L129.0 74.0 L128.0 74.0 L127.0 74.0 L126.0 74.0 L125.0 74.0 L124.0 74.0 L123.0 74.0 L122.0 74.0 L121.0 74.0 L120.0 74.0 L119.0 74.0 L118.0 74.0 L117.0 74.0 L116.0 74.0 L115.0 74.0 L114.0 74.0 L113.0 74.0 L112.0 74.0 L111.0 74.0 L110.0 74.0 L109.0 74.0 L108.0 74.0 L107.0 74.0 L106.0 74.0 L105.0 74.0 L104.0 74.0 L103.0 74.0 L102.0 74.0 L101.0 74.0 L100.0 74.0 L99.0 74.0 L98.0 74.0 L97.0 74.0 L96.0 74.0 L95.0 74.0 L94.0 74.0 L93.0 74.0 L92.0 74.0 L91.0 74.0 L90.0 74.0 L89.0 74.0 L88.0 74.0 L87.0 74.0 L86.0 74.0 L85.0 74.0 L84.0 74.0 L83.0 74.0 L82.0 74.0 L81.0 74.0 L80.0 74.0 L79.0 74.0 L78.0 74.0 L77.0 74.0 L76.0 74.0 L75.0 74.0 L74.0 74.0 L73.0 74.0 L72.0 74.0 L71.0 74.0 L70.0 74.0 L69.0 74.0 L68.0 74.0 L67.0 74.0 L66.0 74.0 L65.0 74.0 L64.0 74.0 L63.0 74.0 L62.0 74.0 L61.0 74.0 L60.0 74.0 L59.0 74.0 L58.0 74.0 L57.0 74.0 L56.0 74.0 L55.0 74.0 L54.0 74.0 L53.0 74.0 L52.0 74.0 L51.0 74.0 L50.0 74.0 L49.0 74.0 L48.0 74.0 L47.0 74.0 L46.0 74.0 L45.0 74.0 L44.0 74.0 L43.0 74.0 L42.0 74.0 L41.0 74.0 L40.0 74.0 L39.0 74.0 L38.0 74.0 L37.0 74.0 L36.0 74.0 L35.0 74.0 L34.0 74.0 L33.0 74.0 L32.0 74.0 L31.0 74.0 L30.0 74.0 L29.0 74.0 L28.0 74.0 L27.0 74.0 L26.0 74.0 L25.0 74.0 L24.0 74.0 L23.0 74.0 L22.0 74.0 L21.0 74.0 L20.0 74.0 L19.0 74.0 L18.0 74.0 L17.0 74.0 L16.0 74.0 L15.0 74.0 L14.0 74.0 L13.0 74.0 L12.0 74.0 L11.0 74.0 L10.0 74.0 L9.0 74.0 L8.0 74.0 L7.0 74.0 L6.0 74.0 L5.0 74.0 L4.0 74.0 L3.0 74.0 L2.0 74.0 L1.0 74.0Z" fill="#4a78d8"/><path d="M170.0 36.2 L171.0 35.2 L172.0 34.9 L173.0 35.3 L174.0 36.4 L175.0 35.5 L176.0 35.7 L177.0 36.0 L178.0 37.0 L179.0 38.0 L180.0 40.0 L181.0 39.5 L182.0 40.2 L183.0 43.0 L183.0 74.0 L182.0 74.0 L181.0 74.0 L180.0 74.0 L179.0 74.0 L178.0 74.0 L177.0 74.0 L176.0 74.0 L175.0 74.0 L174.0 74.0 L173.0 74.0 L172.0 74.0 L171.0 74.0 L170.0 74.0Z" fill="#5fd0e0"/><path d="M197.0 27.9 L198.0 28.6 L199.0 27.5 L200.0 29.1 L201.0 29.4 L202.0 27.9 L203.0 29.6 L204.0 30.2 L205.0 30.0 L206.0 29.9 L207.0 29.4 L208.0 29.6 L209.0 29.4 L210.0 29.1 L211.0 30.6 L212.0 29.9 L213.0 31.4 L214.0 29.5 L215.0 31.8 L216.0 31.5 L217.0 32.3 L218.0 32.5 L219.0 32.8 L220.0 32.2 L221.0 31.0 L222.0 33.1 L223.0 31.9 L224.0 32.5 L225.0 33.7 L226.0 33.6 L227.0 33.5 L228.0 35.1 L229.0 34.3 L230.0 33.7 L231.0 33.6 L232.0 35.3 L233.0 34.4 L234.0 35.3 L235.0 34.3 L236.0 34.0 L237.0 34.9 L238.0 35.0 L239.0 32.5 L240.0 33.2 L241.0 32.7 L242.0 31.5 L243.0 30.7 L244.0 27.7 L245.0 28.5 L246.0 28.2 L247.0 25.0 L248.0 23.8 L249.0 22.0 L250.0 20.9 L251.0 18.9 L252.0 17.3 L253.0 16.3 L254.0 12.7 L255.0 12.0 L256.0 11.4 L257.0 10.6 L258.0 9.0 L259.0 9.4 L260.0 7.1 L261.0 3.1 L262.0 2.2 L263.0 1.2 L264.0 3.0 L265.0 5.6 L266.0 11.7 L267.0 16.0 L268.0 17.4 L268.0 74.0 L267.0 74.0 L266.0 74.0 L265.0 74.0 L264.0 74.0 L263.0 74.0 L262.0 74.0 L261.0 74.0 L260.0 74.0 L259.0 74.0 L258.0 74.0 L257.0 74.0 L256.0 74.0 L255.0 74.0 L254.0 74.0 L253.0 74.0 L252.0 74.0 L251.0 74.0 L250.0 74.0 L249.0 74.0 L248.0 74.0 L247.0 74.0 L246.0 74.0 L245.0 74.0 L244.0 74.0 L243.0 74.0 L242.0 74.0 L241.0 74.0 L240.0 74.0 L239.0 74.0 L238.0 74.0 L237.0 74.0 L236.0 74.0 L235.0 74.0 L234.0 74.0 L233.0 74.0 L232.0 74.0 L231.0 74.0 L230.0 74.0 L229.0 74.0 L228.0 74.0 L227.0 74.0 L226.0 74.0 L225.0 74.0 L224.0 74.0 L223.0 74.0 L222.0 74.0 L221.0 74.0 L220.0 74.0 L219.0 74.0 L218.0 74.0 L217.0 74.0 L216.0 74.0 L215.0 74.0 L214.0 74.0 L213.0 74.0 L212.0 74.0 L211.0 74.0 L210.0 74.0 L209.0 74.0 L208.0 74.0 L207.0 74.0 L206.0 74.0 L205.0 74.0 L204.0 74.0 L203.0 74.0 L202.0 74.0 L201.0 74.0 L200.0 74.0 L199.0 74.0 L198.0 74.0 L197.0 74.0Z" fill="#e65a5a"/><path d="M165.0 36.2 L166.0 36.0 L167.0 34.9 L168.0 35.3 L169.0 35.1 L170.0 33.7 L171.0 32.4 L172.0 32.0 L173.0 31.9 L174.0 31.8 L175.0 31.7 L176.0 30.1 L177.0 30.5 L178.0 29.8 L179.0 29.0 L180.0 28.6 L181.0 28.6 L182.0 28.8 L183.0 27.8 L184.0 28.2 L185.0 27.3 L186.0 26.5 L187.0 26.9 L188.0 27.0 L189.0 25.2 L190.0 25.6 L191.0 24.9 L192.0 25.3 L193.0 24.7 L194.0 22.7 L195.0 23.2 L196.0 22.3 L197.0 21.6 L198.0 22.7 L199.0 22.4 L200.0 24.7 L201.0 24.9 L202.0 26.1 L203.0 26.4 L204.0 26.7 L205.0 27.4 L206.0 27.6 L207.0 27.0 L208.0 28.7 L209.0 27.9 L210.0 28.8 L211.0 30.6 L212.0 29.1 L213.0 29.5 L214.0 29.7 L215.0 31.8 L216.0 30.4 L217.0 30.2 L218.0 32.4 L219.0 30.9 L220.0 32.9 L221.0 32.7 L222.0 33.4 L223.0 33.9 L224.0 33.2 L225.0 34.0 L226.0 32.4 L227.0 34.4 L228.0 33.8 L229.0 33.8 L230.0 31.9 L231.0 33.0 L232.0 32.9 L233.0 30.4 L234.0 30.5 L235.0 30.6 L236.0 30.8 L237.0 28.9 L238.0 28.3 L239.0 28.0 L240.0 28.4 L241.0 28.3 L242.0 27.2 L243.0 26.8 L244.0 26.6 L245.0 26.2 L246.0 26.0 L246.0 74.0 L245.0 74.0 L244.0 74.0 L243.0 74.0 L242.0 74.0 L241.0 74.0 L240.0 74.0 L239.0 74.0 L238.0 74.0 L237.0 74.0 L236.0 74.0 L235.0 74.0 L234.0 74.0 L233.0 74.0 L232.0 74.0 L231.0 74.0 L230.0 74.0 L229.0 74.0 L228.0 74.0 L227.0 74.0 L226.0 74.0 L225.0 74.0 L224.0 74.0 L223.0 74.0 L222.0 74.0 L221.0 74.0 L220.0 74.0 L219.0 74.0 L218.0 74.0 L217.0 74.0 L216.0 74.0 L215.0 74.0 L214.0 74.0 L213.0 74.0 L212.0 74.0 L211.0 74.0 L210.0 74.0 L209.0 74.0 L208.0 74.0 L207.0 74.0 L206.0 74.0 L205.0 74.0 L204.0 74.0 L203.0 74.0 L202.0 74.0 L201.0 74.0 L200.0 74.0 L199.0 74.0 L198.0 74.0 L197.0 74.0 L196.0 74.0 L195.0 74.0 L194.0 74.0 L193.0 74.0 L192.0 74.0 L191.0 74.0 L190.0 74.0 L189.0 74.0 L188.0 74.0 L187.0 74.0 L186.0 74.0 L185.0 74.0 L184.0 74.0 L183.0 74.0 L182.0 74.0 L181.0 74.0 L180.0 74.0 L179.0 74.0 L178.0 74.0 L177.0 74.0 L176.0 74.0 L175.0 74.0 L174.0 74.0 L173.0 74.0 L172.0 74.0 L171.0 74.0 L170.0 74.0 L169.0 74.0 L168.0 74.0 L167.0 74.0 L166.0 74.0 L165.0 74.0Z" fill="#5ed05e"/><path d="M170.0 37.1 L171.0 37.7 L172.0 38.5 L173.0 36.5 L174.0 36.9 L175.0 34.9 L176.0 35.8 L177.0 35.5 L178.0 34.8 L179.0 33.9 L180.0 33.3 L181.0 33.2 L182.0 33.4 L183.0 30.9 L184.0 30.4 L185.0 31.8 L186.0 32.0 L187.0 30.6 L188.0 30.1 L189.0 30.6 L190.0 28.9 L191.0 28.8 L192.0 28.3 L193.0 29.0 L194.0 28.0 L195.0 27.5 L196.0 28.4 L197.0 29.3 L198.0 27.9 L199.0 29.2 L200.0 28.7 L201.0 30.1 L202.0 29.7 L203.0 29.2 L204.0 29.3 L205.0 29.1 L206.0 30.5 L207.0 30.5 L208.0 30.2 L209.0 31.0 L210.0 31.2 L211.0 32.6 L212.0 31.2 L213.0 33.7 L214.0 32.6 L215.0 33.2 L216.0 33.1 L217.0 34.3 L218.0 34.5 L219.0 34.1 L220.0 34.2 L221.0 35.0 L222.0 35.6 L223.0 34.7 L224.0 35.8 L225.0 36.7 L226.0 35.6 L227.0 35.3 L228.0 35.5 L229.0 36.7 L230.0 36.6 L231.0 37.3 L232.0 37.1 L233.0 35.5 L234.0 35.3 L235.0 35.5 L236.0 35.3 L237.0 36.7 L238.0 36.6 L239.0 36.0 L240.0 33.7 L241.0 34.6 L242.0 32.5 L243.0 32.1 L244.0 32.2 L245.0 29.9 L246.0 29.2 L247.0 30.2 L248.0 27.0 L249.0 25.3 L250.0 24.1 L251.0 22.5 L252.0 19.0 L253.0 18.0 L254.0 16.9 L255.0 16.8 L256.0 15.9 L257.0 16.6 L258.0 17.4 L259.0 15.7 L260.0 15.9 L261.0 14.6 L262.0 14.8 L263.0 15.5 L264.0 13.8 L265.0 15.5 L266.0 15.2 L267.0 12.8 L268.0 14.7 L269.0 14.3 L270.0 18.9 L271.0 24.1 L272.0 38.3 L273.0 42.2 L274.0 35.0 L275.0 28.3 L276.0 18.9 L277.0 12.8 L278.0 13.9 L279.0 13.7 L279.0 74.0 L278.0 74.0 L277.0 74.0 L276.0 74.0 L275.0 74.0 L274.0 74.0 L273.0 74.0 L272.0 74.0 L271.0 74.0 L270.0 74.0 L269.0 74.0 L268.0 74.0 L267.0 74.0 L266.0 74.0 L265.0 74.0 L264.0 74.0 L263.0 74.0 L262.0 74.0 L261.0 74.0 L260.0 74.0 L259.0 74.0 L258.0 74.0 L257.0 74.0 L256.0 74.0 L255.0 74.0 L254.0 74.0 L253.0 74.0 L252.0 74.0 L251.0 74.0 L250.0 74.0 L249.0 74.0 L248.0 74.0 L247.0 74.0 L246.0 74.0 L245.0 74.0 L244.0 74.0 L243.0 74.0 L242.0 74.0 L241.0 74.0 L240.0 74.0 L239.0 74.0 L238.0 74.0 L237.0 74.0 L236.0 74.0 L235.0 74.0 L234.0 74.0 L233.0 74.0 L232.0 74.0 L231.0 74.0 L230.0 74.0 L229.0 74.0 L228.0 74.0 L227.0 74.0 L226.0 74.0 L225.0 74.0 L224.0 74.0 L223.0 74.0 L222.0 74.0 L221.0 74.0 L220.0 74.0 L219.0 74.0 L218.0 74.0 L217.0 74.0 L216.0 74.0 L215.0 74.0 L214.0 74.0 L213.0 74.0 L212.0 74.0 L211.0 74.0 L210.0 74.0 L209.0 74.0 L208.0 74.0 L207.0 74.0 L206.0 74.0 L205.0 74.0 L204.0 74.0 L203.0 74.0 L202.0 74.0 L201.0 74.0 L200.0 74.0 L199.0 74.0 L198.0 74.0 L197.0 74.0 L196.0 74.0 L195.0 74.0 L194.0 74.0 L193.0 74.0 L192.0 74.0 L191.0 74.0 L190.0 74.0 L189.0 74.0 L188.0 74.0 L187.0 74.0 L186.0 74.0 L185.0 74.0 L184.0 74.0 L183.0 74.0 L182.0 74.0 L181.0 74.0 L180.0 74.0 L179.0 74.0 L178.0 74.0 L177.0 74.0 L176.0 74.0 L175.0 74.0 L174.0 74.0 L173.0 74.0 L172.0 74.0 L171.0 74.0 L170.0 74.0Z" fill="#f2ee5e"/><path d="M1.0 69.8 L2.0 69.3 L3.0 69.6 L4.0 69.3 L5.0 69.6 L6.0 69.5 L7.0 69.3 L8.0 68.8 L9.0 69.2 L10.0 69.1 L11.0 68.6 L12.0 69.2 L13.0 68.9 L14.0 68.2 L15.0 69.0 L16.0 68.1 L17.0 68.2 L18.0 68.5 L19.0 68.3 L20.0 68.2 L21.0 68.2 L22.0 67.9 L23.0 67.7 L24.0 67.4 L25.0 67.2 L26.0 67.8 L27.0 67.7 L28.0 67.5 L29.0 67.6 L30.0 67.1 L31.0 66.9 L32.0 66.9 L33.0 67.3 L34.0 66.4 L35.0 66.8 L36.0 66.5 L37.0 66.9 L38.0 66.4 L39.0 66.3 L40.0 66.3 L41.0 66.4 L42.0 66.6 L43.0 66.1 L44.0 66.5 L45.0 65.7 L46.0 65.8 L47.0 65.6 L48.0 65.6 L49.0 66.2 L50.0 66.1 L51.0 65.5 L52.0 65.4 L53.0 65.6 L54.0 65.8 L55.0 65.8 L56.0 65.7 L57.0 65.5 L58.0 65.0 L59.0 65.2 L60.0 64.9 L61.0 65.2 L62.0 65.2 L63.0 64.8 L64.0 64.7 L65.0 65.2 L66.0 64.4 L67.0 65.1 L68.0 65.1 L69.0 65.1 L70.0 64.5 L71.0 64.6 L72.0 64.5 L73.0 64.4 L74.0 64.7 L75.0 64.3 L76.0 63.8 L77.0 64.3 L78.0 63.8 L79.0 63.8 L80.0 63.8 L81.0 63.0 L82.0 63.7 L83.0 63.5 L84.0 63.2 L85.0 63.1 L86.0 63.0 L87.0 62.6 L88.0 62.8 L89.0 62.2 L90.0 62.6 L91.0 62.6 L92.0 62.3 L93.0 62.4 L94.0 62.7 L95.0 62.5 L96.0 61.6 L97.0 62.2 L98.0 61.9 L99.0 61.2 L100.0 61.5 L101.0 61.2 L102.0 60.9 L103.0 61.1 L104.0 61.3 L105.0 60.5 L106.0 60.9 L107.0 60.5 L108.0 59.7 L109.0 60.2 L110.0 59.8 L111.0 59.9 L112.0 59.5 L113.0 59.3 L114.0 58.7 L115.0 59.0 L116.0 58.9 L117.0 58.6 L118.0 58.0 L119.0 58.1 L120.0 57.7 L121.0 57.1 L122.0 56.8 L123.0 56.7 L124.0 56.6 L125.0 56.3 L126.0 56.5 L127.0 56.5 L128.0 56.1 L129.0 55.8 L130.0 55.8 L131.0 55.3 L132.0 55.2 L133.0 55.3 L134.0 54.7 L135.0 54.2 L136.0 54.7 L137.0 54.2 L138.0 53.6 L139.0 53.3 L140.0 53.2 L141.0 53.0 L142.0 52.4 L143.0 51.9 L144.0 51.8 L145.0 52.1 L146.0 51.2 L147.0 51.3 L148.0 50.8 L149.0 50.5 L150.0 50.2 L151.0 50.2 L152.0 49.6 L153.0 49.0 L154.0 48.6 L155.0 48.2 L156.0 48.1 L157.0 47.2 L158.0 46.7 L159.0 46.7 L160.0 46.2 L161.0 46.1 L162.0 45.0 L163.0 44.9 L164.0 44.4 L165.0 43.5 L166.0 43.8 L167.0 42.5 L168.0 41.8 L169.0 41.5 L170.0 40.6 L171.0 41.0 L172.0 41.4 L173.0 41.9 L174.0 42.6 L175.0 44.0 L176.0 44.3 L177.0 45.5 L178.0 45.9 L179.0 47.1 L180.0 47.2 L181.0 47.6 L182.0 48.0 L183.0 48.8 L184.0 49.0 L185.0 49.1 L186.0 49.1 L187.0 50.1 L188.0 50.7 L189.0 50.7 L190.0 50.4 L191.0 50.8 L192.0 51.2 L193.0 51.6 L194.0 51.8 L195.0 52.2 L196.0 53.1 L197.0 53.4 L198.0 52.8 L199.0 53.7 L200.0 53.3 L201.0 53.7 L202.0 53.9 L203.0 54.0 L204.0 53.1 L205.0 53.5 L206.0 53.9 L207.0 54.3 L208.0 53.5 L209.0 53.8 L210.0 54.5 L211.0 53.8 L212.0 54.2 L213.0 54.2 L214.0 54.6 L215.0 55.0 L216.0 54.2 L217.0 54.8 L218.0 54.8 L219.0 54.9 L220.0 54.6 L221.0 55.0 L222.0 54.4 L223.0 54.4 L224.0 54.3 L225.0 54.8 L226.0 54.5 L227.0 54.3 L228.0 54.2 L229.0 54.8 L230.0 54.6 L231.0 54.7 L232.0 54.4 L233.0 54.5 L234.0 54.2 L235.0 54.7 L236.0 54.1 L237.0 54.5 L238.0 54.3 L239.0 53.6 L240.0 52.4 L241.0 51.9 L242.0 51.9 L243.0 51.1 L244.0 50.7 L245.0 50.1 L246.0 49.0 L247.0 48.8 L248.0 48.0 L249.0 47.0 L250.0 46.4 L251.0 44.8 L252.0 43.9 L253.0 43.2 L254.0 41.1 L255.0 40.3 L256.0 38.6 L257.0 37.1 L258.0 36.1 L259.0 34.1 L260.0 32.3 L261.0 30.8 L262.0 29.7 L263.0 28.1 L264.0 26.4 L265.0 25.4 L266.0 24.9 L267.0 22.9 L268.0 22.1 L269.0 21.5 L270.0 22.9 L271.0 25.9 L272.0 43.1 L273.0 45.1 L274.0 36.7 L275.0 23.3 L276.0 15.9 L277.0 12.4 L278.0 11.6 L279.0 11.6 L279.0 74.0 L278.0 74.0 L277.0 74.0 L276.0 74.0 L275.0 74.0 L274.0 74.0 L273.0 74.0 L272.0 74.0 L271.0 74.0 L270.0 74.0 L269.0 74.0 L268.0 74.0 L267.0 74.0 L266.0 74.0 L265.0 74.0 L264.0 74.0 L263.0 74.0 L262.0 74.0 L261.0 74.0 L260.0 74.0 L259.0 74.0 L258.0 74.0 L257.0 74.0 L256.0 74.0 L255.0 74.0 L254.0 74.0 L253.0 74.0 L252.0 74.0 L251.0 74.0 L250.0 74.0 L249.0 74.0 L248.0 74.0 L247.0 74.0 L246.0 74.0 L245.0 74.0 L244.0 74.0 L243.0 74.0 L242.0 74.0 L241.0 74.0 L240.0 74.0 L239.0 74.0 L238.0 74.0 L237.0 74.0 L236.0 74.0 L235.0 74.0 L234.0 74.0 L233.0 74.0 L232.0 74.0 L231.0 74.0 L230.0 74.0 L229.0 74.0 L228.0 74.0 L227.0 74.0 L226.0 74.0 L225.0 74.0 L224.0 74.0 L223.0 74.0 L222.0 74.0 L221.0 74.0 L220.0 74.0 L219.0 74.0 L218.0 74.0 L217.0 74.0 L216.0 74.0 L215.0 74.0 L214.0 74.0 L213.0 74.0 L212.0 74.0 L211.0 74.0 L210.0 74.0 L209.0 74.0 L208.0 74.0 L207.0 74.0 L206.0 74.0 L205.0 74.0 L204.0 74.0 L203.0 74.0 L202.0 74.0 L201.0 74.0 L200.0 74.0 L199.0 74.0 L198.0 74.0 L197.0 74.0 L196.0 74.0 L195.0 74.0 L194.0 74.0 L193.0 74.0 L192.0 74.0 L191.0 74.0 L190.0 74.0 L189.0 74.0 L188.0 74.0 L187.0 74.0 L186.0 74.0 L185.0 74.0 L184.0 74.0 L183.0 74.0 L182.0 74.0 L181.0 74.0 L180.0 74.0 L179.0 74.0 L178.0 74.0 L177.0 74.0 L176.0 74.0 L175.0 74.0 L174.0 74.0 L173.0 74.0 L172.0 74.0 L171.0 74.0 L170.0 74.0 L169.0 74.0 L168.0 74.0 L167.0 74.0 L166.0 74.0 L165.0 74.0 L164.0 74.0 L163.0 74.0 L162.0 74.0 L161.0 74.0 L160.0 74.0 L159.0 74.0 L158.0 74.0 L157.0 74.0 L156.0 74.0 L155.0 74.0 L154.0 74.0 L153.0 74.0 L152.0 74.0 L151.0 74.0 L150.0 74.0 L149.0 74.0 L148.0 74.0 L147.0 74.0 L146.0 74.0 L145.0 74.0 L144.0 74.0 L143.0 74.0 L142.0 74.0 L141.0 74.0 L140.0 74.0 L139.0 74.0 L138.0 74.0 L137.0 74.0 L136.0 74.0 L135.0 74.0 L134.0 74.0 L133.0 74.0 L132.0 74.0 L131.0 74.0 L130.0 74.0 L129.0 74.0 L128.0 74.0 L127.0 74.0 L126.0 74.0 L125.0 74.0 L124.0 74.0 L123.0 74.0 L122.0 74.0 L121.0 74.0 L120.0 74.0 L119.0 74.0 L118.0 74.0 L117.0 74.0 L116.0 74.0 L115.0 74.0 L114.0 74.0 L113.0 74.0 L112.0 74.0 L111.0 74.0 L110.0 74.0 L109.0 74.0 L108.0 74.0 L107.0 74.0 L106.0 74.0 L105.0 74.0 L104.0 74.0 L103.0 74.0 L102.0 74.0 L101.0 74.0 L100.0 74.0 L99.0 74.0 L98.0 74.0 L97.0 74.0 L96.0 74.0 L95.0 74.0 L94.0 74.0 L93.0 74.0 L92.0 74.0 L91.0 74.0 L90.0 74.0 L89.0 74.0 L88.0 74.0 L87.0 74.0 L86.0 74.0 L85.0 74.0 L84.0 74.0 L83.0 74.0 L82.0 74.0 L81.0 74.0 L80.0 74.0 L79.0 74.0 L78.0 74.0 L77.0 74.0 L76.0 74.0 L75.0 74.0 L74.0 74.0 L73.0 74.0 L72.0 74.0 L71.0 74.0 L70.0 74.0 L69.0 74.0 L68.0 74.0 L67.0 74.0 L66.0 74.0 L65.0 74.0 L64.0 74.0 L63.0 74.0 L62.0 74.0 L61.0 74.0 L60.0 74.0 L59.0 74.0 L58.0 74.0 L57.0 74.0 L56.0 74.0 L55.0 74.0 L54.0 74.0 L53.0 74.0 L52.0 74.0 L51.0 74.0 L50.0 74.0 L49.0 74.0 L48.0 74.0 L47.0 74.0 L46.0 74.0 L45.0 74.0 L44.0 74.0 L43.0 74.0 L42.0 74.0 L41.0 74.0 L40.0 74.0 L39.0 74.0 L38.0 74.0 L37.0 74.0 L36.0 74.0 L35.0 74.0 L34.0 74.0 L33.0 74.0 L32.0 74.0 L31.0 74.0 L30.0 74.0 L29.0 74.0 L28.0 74.0 L27.0 74.0 L26.0 74.0 L25.0 74.0 L24.0 74.0 L23.0 74.0 L22.0 74.0 L21.0 74.0 L20.0 74.0 L19.0 74.0 L18.0 74.0 L17.0 74.0 L16.0 74.0 L15.0 74.0 L14.0 74.0 L13.0 74.0 L12.0 74.0 L11.0 74.0 L10.0 74.0 L9.0 74.0 L8.0 74.0 L7.0 74.0 L6.0 74.0 L5.0 74.0 L4.0 74.0 L3.0 74.0 L2.0 74.0 L1.0 74.0Z" fill="url(#hg)"/><path d="M271.0 31.0 L272.0 35.5 L273.0 37.9 L273.0 40.0 L272.0 40.0 L271.0 40.0Z" fill="#d050e0" opacity="0.9"/></svg>
<div class="a" style="left:1087px;top:76px;width:11px;height:11px;background:#1d1d1d;border:1px solid #333"></div>
<svg class="a" style="left:1088px;top:77px" width="9" height="8"><path d="M4.5 0.5 L8.5 7.5 L0.5 7.5Z" fill="#3a3ad8"/></svg>
<div class="a" style="left:1352px;top:76px;width:13px;height:12px;background:#1d1d1d;border:1px solid #333"></div>
<svg class="a" style="left:1353px;top:77px" width="10" height="9"><path d="M5 0.5 L9.5 8.5 L0.5 8.5Z" fill="#e6e6e6"/></svg>
<div class="t" style="left:1086.5px;top:153.00px;font-size:8.3px;line-height:10.79px;color:#a8a8a8;font-weight:normal;">ISO 400</div>
<div class="t" style="left:1178.4px;top:153.00px;font-size:8.3px;line-height:10.79px;color:#a8a8a8;font-weight:normal;">61 mm</div>
<div class="t" style="left:1249px;top:153.00px;font-size:8.3px;line-height:10.79px;color:#a8a8a8;font-weight:normal;"><i>f</i> / 2.0</div>
<div class="t" style="left:1305.5px;width:60px;text-align:right;top:153.00px;font-size:8.3px;line-height:10.79px;color:#a8a8a8;font-weight:normal;"><sup style="font-size:6px">1</sup>&#8260;<sub style="font-size:5px">400</sub> sec</div>
<div class="a" style="left:1084.6px;top:173.5px;width:11px;height:8px;border:1px solid #888"></div>
<div class="t" style="left:1097.8px;top:171.85px;font-size:9.0px;line-height:11.7px;color:#a8a8a8;font-weight:normal;">Original Photo</div>
<div class="a" style="left:1079px;top:194.5px;width:294px;height:29px;background:#3e3e3e;border:1px solid #1e1e1e"></div>
<svg class="a" style="left:1168px;top:199px" width="120" height="20" viewBox="0 0 120 20" fill="none" stroke="#bdbdbd" stroke-width="1.3">
<path d="M5 3 L5 13 L15 13 M2 6 L12 6 L12 16"/><path d="M3 15 L2 17 L4 18" /><path d="M15 3 L17 2 L16 5"/>
<g transform="translate(43 10) rotate(-45)"><rect x="-8" y="-3.5" width="16" height="7" rx="3.5" fill="#bdbdbd" stroke="none"/><circle cx="-1" cy="0" r="0.6" fill="#333" stroke="none"/><circle cx="1" cy="0" r="0.6" fill="#333" stroke="none"/><circle cx="0" cy="-1.2" r="0.6" fill="#333" stroke="none"/><circle cx="0" cy="1.2" r="0.6" fill="#333" stroke="none"/></g>
<path d="M72 11 C75 6 83 6 86 11 C83 16 75 16 72 11Z"/><circle cx="79" cy="11" r="2" fill="#bdbdbd"/><path d="M71 3 L71 7 M69 5 L73 5" stroke-width="1"/>
<circle cx="110" cy="10" r="7" stroke-dasharray="1.5 1.5" fill="#555"/>
</svg>
<div class="a" style="left:1076px;top:223px;width:297px;height:24px;background:#2d2d2d"></div>
<div class="t" style="left:1292.2px;width:60px;text-align:right;top:229.18px;font-size:10.8px;line-height:14.04px;color:#bcbcbc;font-weight:normal;">Basic</div>
<svg class="a" style="left:1361px;top:232px" width="8" height="8"><path d="M0 0 L8 0 L4 7.5Z" fill="#c8c8c8"/></svg>
<div class="a" style="left:1079px;top:247px;width:294px;height:26px;background:#474747;border:1px solid #222;border-bottom:none"></div>
<div class="t" style="left:1088.4px;top:255.74px;font-size:8.7px;line-height:11.31px;color:#a0a0a0;font-weight:normal;">Treatment :</div>
<div class="t" style="left:1267.5px;top:254.22px;font-size:8.9px;line-height:11.57px;color:#dedede;font-weight:normal;">Color</div>
<div class="a" style="left:1298px;top:254px;width:1px;height:12px;background:#383838"></div>
<div class="t" style="left:1307.6px;top:254.22px;font-size:8.9px;line-height:11.57px;color:#b8b8b8;font-weight:normal;">Black &amp; White</div>
<div class="a" style="left:1079px;top:272.5px;width:294px;height:26px;background:#474747;border:1px solid #222;border-bottom:none"></div>
<div class="t" style="left:1088px;top:281.65px;font-size:8.7px;line-height:11.31px;color:#a0a0a0;font-weight:normal;">Profile :</div>
<div class="t" style="left:1129.4px;top:281.58px;font-size:8.8px;line-height:11.44px;color:#d2d2d2;font-weight:normal;">Adobe Standard</div>
<svg class="a" style="left:1198px;top:283px" width="5" height="9"><path d="M0 3.5 L2.5 0 L5 3.5Z M0 5.5 L2.5 9 L5 5.5Z" fill="#999"/></svg>
<svg class="a" style="left:1345.5px;top:278.5px" width="16" height="15" fill="none" stroke="#9a9a9a" stroke-width="1"><rect x="0.5" y="0.5" width="6" height="5"/><rect x="9" y="0.5" width="6" height="5"/><rect x="0.5" y="8.5" width="6" height="5"/><rect x="9" y="8.5" width="6" height="5"/></svg>
<div class="a" style="left:1079px;top:298px;width:294px;height:71px;background:#474747;border:1px solid #222;border-bottom:none"></div>
<svg class="a" style="left:1086px;top:302px" width="30" height="28" viewBox="0 0 30 28"><circle cx="15" cy="13" r="12" fill="#3e3e3e"/><path d="M3 26 L17 10" stroke="#e8e8e8" stroke-width="2.2"/><path d="M3 26 L9 19" stroke="#fff" stroke-width="2.2"/><path d="M15 8 L20 13" stroke="#111" stroke-width="4"/><path d="M19 9 L24 3" stroke="#111" stroke-width="3.5"/></svg>
<div class="t" style="left:1141.4px;top:306.17px;font-size:8.2px;line-height:10.66px;color:#9c9c9c;font-weight:normal;">WB :</div>
<div class="t" style="left:1271.2px;width:60px;text-align:right;top:305.71px;font-size:8.9px;line-height:11.57px;color:#d0d0d0;font-weight:normal;">Custom</div>
<svg class="a" style="left:1336.5px;top:307px" width="5" height="9"><path d="M0 3.5 L2.5 0 L5 3.5Z M0 5.5 L2.5 9 L5 5.5Z" fill="#888"/></svg>
<div class="a" style="left:1141px;top:324.5px;width:190px;height:1px;background:#3e3e3e"></div>
<div class="t" style="left:1053.2px;width:80px;text-align:right;top:334.77px;font-size:8.2px;line-height:10.66px;color:#a8a8a8;font-weight:normal;text-shadow:0 1px 0 #2a2a2a">Temp</div>
<div class="a" style="left:1141px;top:337.90000000000003px;width:175.5px;height:2.8px;background:linear-gradient(90deg,#3a3aa0,#5e5e5e 50%,#b8b030);border-radius:1.5px;box-shadow:0 0 0 0.7px #222,0 1px 0 #5a5a5a"></div>
<div class="a" style="left:1146.3px;top:334.3px;width:1px;height:1.6px;background:#626262"></div>
<div class="a" style="left:1166.8999999999999px;top:334.3px;width:1px;height:1.6px;background:#626262"></div>
<div class="a" style="left:1187.5px;top:334.3px;width:1px;height:1.6px;background:#626262"></div>
<div class="a" style="left:1208.1px;top:334.3px;width:1px;height:1.6px;background:#626262"></div>
<div class="a" style="left:1228.7px;top:334.3px;width:1px;height:1.6px;background:#626262"></div>
<div class="a" style="left:1249.3px;top:334.3px;width:1px;height:1.6px;background:#626262"></div>
<div class="a" style="left:1269.8999999999999px;top:334.3px;width:1px;height:1.6px;background:#626262"></div>
<div class="a" style="left:1290.5px;top:334.3px;width:1px;height:1.6px;background:#626262"></div>
<div class="a" style="left:1311.1px;top:334.3px;width:1px;height:1.6px;background:#626262"></div>
<svg class="a" style="left:1210.6px;top:332.8px" width="12" height="12" viewBox="0 0 12 12"><path d="M6 0.8 L10.6 6.2 C10.8 9.6 8.6 11 6 11 C3.4 11 1.2 9.6 1.4 6.2Z" fill="#a4a4a4" stroke="#1a1a1a" stroke-width="1"/></svg>
<div class="t" style="left:1301px;width:60px;text-align:right;top:333.26px;font-size:9.6px;line-height:12.48px;color:#e0e0e0;font-weight:normal;text-shadow:0 1px 0 #2a2a2a">6,300</div>
<div class="t" style="left:1053.2px;width:80px;text-align:right;top:350.57px;font-size:8.2px;line-height:10.66px;color:#a8a8a8;font-weight:normal;text-shadow:0 1px 0 #2a2a2a">Tint</div>
<div class="a" style="left:1141px;top:353.70000000000005px;width:175.5px;height:2.8px;background:linear-gradient(90deg,#30a030,#5e5e5e 50%,#b035b0);border-radius:1.5px;box-shadow:0 0 0 0.7px #222,0 1px 0 #5a5a5a"></div>
<div class="a" style="left:1146.3px;top:350.1px;width:1px;height:1.6px;background:#626262"></div>
<div class="a" style="left:1166.8999999999999px;top:350.1px;width:1px;height:1.6px;background:#626262"></div>
<div class="a" style="left:1187.5px;top:350.1px;width:1px;height:1.6px;background:#626262"></div>
<div class="a" style="left:1208.1px;top:350.1px;width:1px;height:1.6px;background:#626262"></div>
<div class="a" style="left:1228.7px;top:350.1px;width:1px;height:1.6px;background:#626262"></div>
<div class="a" style="left:1249.3px;top:350.1px;width:1px;height:1.6px;background:#626262"></div>
<div class="a" style="left:1269.8999999999999px;top:350.1px;width:1px;height:1.6px;background:#626262"></div>
<div class="a" style="left:1290.5px;top:350.1px;width:1px;height:1.6px;background:#626262"></div>
<div class="a" style="left:1311.1px;top:350.1px;width:1px;height:1.6px;background:#626262"></div>
<svg class="a" style="left:1229.5px;top:348.6px" width="12" height="12" viewBox="0 0 12 12"><path d="M6 0.8 L10.6 6.2 C10.8 9.6 8.6 11 6 11 C3.4 11 1.2 9.6 1.4 6.2Z" fill="#a4a4a4" stroke="#1a1a1a" stroke-width="1"/></svg>
<div class="t" style="left:1301px;width:60px;text-align:right;top:349.06px;font-size:9.6px;line-height:12.48px;color:#8a8a8a;font-weight:normal;text-shadow:0 1px 0 #2a2a2a">+ 13</div>
<div class="a" style="left:1079px;top:368.5px;width:294px;height:56.5px;background:#474747;border-top:1px solid #222;border-left:1px solid #222;border-right:1px solid #222"></div>
<div class="t" style="left:1141.4px;top:376.75px;font-size:9.3px;line-height:12.09px;color:#b4b4b4;font-weight:normal;">Tone</div>
<div class="a" style="left:1327px;top:375.6px;width:36.5px;height:12.5px;background:#3e3e3e;border-radius:7px"></div>
<div class="t" style="left:1327.2px;width:36px;text-align:center;top:375.95px;font-size:9.3px;line-height:12.09px;color:#d0d0d0;font-weight:normal;">Auto</div>
<div class="t" style="left:1053.2px;width:80px;text-align:right;top:394.17px;font-size:8.2px;line-height:10.66px;color:#a8a8a8;font-weight:normal;text-shadow:0 1px 0 #2a2a2a">Exposure</div>
<div class="a" style="left:1141px;top:397.3px;width:175.5px;height:2.8px;background:linear-gradient(90deg,#262626,#5e5e5e);border-radius:1.5px;box-shadow:0 0 0 0.7px #222,0 1px 0 #5a5a5a"></div>
<div class="a" style="left:1146.3px;top:393.7px;width:1px;height:1.6px;background:#626262"></div>
<div class="a" style="left:1166.8999999999999px;top:393.7px;width:1px;height:1.6px;background:#626262"></div>
<div class="a" style="left:1187.5px;top:393.7px;width:1px;height:1.6px;background:#626262"></div>
<div class="a" style="left:1208.1px;top:393.7px;width:1px;height:1.6px;background:#626262"></div>
<div class="a" style="left:1228.7px;top:393.7px;width:1px;height:1.6px;background:#626262"></div>
<div class="a" style="left:1249.3px;top:393.7px;width:1px;height:1.6px;background:#626262"></div>
<div class="a" style="left:1269.8999999999999px;top:393.7px;width:1px;height:1.6px;background:#626262"></div>
<div class="a" style="left:1290.5px;top:393.7px;width:1px;height:1.6px;background:#626262"></div>
<div class="a" style="left:1311.1px;top:393.7px;width:1px;height:1.6px;background:#626262"></div>
<svg class="a" style="left:1223.8px;top:392.2px" width="12" height="12" viewBox="0 0 12 12"><path d="M6 0.8 L10.6 6.2 C10.8 9.6 8.6 11 6 11 C3.4 11 1.2 9.6 1.4 6.2Z" fill="#a4a4a4" stroke="#1a1a1a" stroke-width="1"/></svg>
<div class="t" style="left:1301px;width:60px;text-align:right;top:392.66px;font-size:9.6px;line-height:12.48px;color:#e0e0e0;font-weight:normal;text-shadow:0 1px 0 #2a2a2a">+ 0.05</div>
<div class="t" style="left:1053.2px;width:80px;text-align:right;top:409.47px;font-size:8.2px;line-height:10.66px;color:#a8a8a8;font-weight:normal;text-shadow:0 1px 0 #2a2a2a">Contrast</div>
<div class="a" style="left:1141px;top:412.6px;width:175.5px;height:2.8px;background:linear-gradient(90deg,#5e5e5e,#262626);border-radius:1.5px;box-shadow:0 0 0 0.7px #222,0 1px 0 #5a5a5a"></div>
<div class="a" style="left:1146.3px;top:409.0px;width:1px;height:1.6px;background:#626262"></div>
<div class="a" style="left:1166.8999999999999px;top:409.0px;width:1px;height:1.6px;background:#626262"></div>
<div class="a" style="left:1187.5px;top:409.0px;width:1px;height:1.6px;background:#626262"></div>
<div class="a" style="left:1208.1px;top:409.0px;width:1px;height:1.6px;background:#626262"></div>
<div class="a" style="left:1228.7px;top:409.0px;width:1px;height:1.6px;background:#626262"></div>
<div class="a" style="left:1249.3px;top:409.0px;width:1px;height:1.6px;background:#626262"></div>
<div class="a" style="left:1269.8999999999999px;top:409.0px;width:1px;height:1.6px;background:#626262"></div>
<div class="a" style="left:1290.5px;top:409.0px;width:1px;height:1.6px;background:#626262"></div>
<div class="a" style="left:1311.1px;top:409.0px;width:1px;height:1.6px;background:#626262"></div>
<svg class="a" style="left:1226.7px;top:407.5px" width="12" height="12" viewBox="0 0 12 12"><path d="M6 0.8 L10.6 6.2 C10.8 9.6 8.6 11 6 11 C3.4 11 1.2 9.6 1.4 6.2Z" fill="#a4a4a4" stroke="#1a1a1a" stroke-width="1"/></svg>
<div class="t" style="left:1301px;width:60px;text-align:right;top:407.96px;font-size:9.6px;line-height:12.48px;color:#e0e0e0;font-weight:normal;text-shadow:0 1px 0 #2a2a2a">+ 5</div>
<div class="a" style="left:1079px;top:425px;width:294px;height:70px;background:#4a4a4a;border-left:1px solid #222;border-right:1px solid #222;border-top:1px solid #434343"></div>
<div class="t" style="left:1053.2px;width:80px;text-align:right;top:433.47px;font-size:8.2px;line-height:10.66px;color:#a8a8a8;font-weight:normal;text-shadow:0 1px 0 #2a2a2a">Highlights</div>
<div class="a" style="left:1141px;top:436.6px;width:175.5px;height:2.8px;background:linear-gradient(90deg,#262626,#5e5e5e);border-radius:1.5px;box-shadow:0 0 0 0.7px #222,0 1px 0 #5a5a5a"></div>
<div class="a" style="left:1146.3px;top:433.0px;width:1px;height:1.6px;background:#626262"></div>
<div class="a" style="left:1166.8999999999999px;top:433.0px;width:1px;height:1.6px;background:#626262"></div>
<div class="a" style="left:1187.5px;top:433.0px;width:1px;height:1.6px;background:#626262"></div>
<div class="a" style="left:1208.1px;top:433.0px;width:1px;height:1.6px;background:#626262"></div>
<div class="a" style="left:1228.7px;top:433.0px;width:1px;height:1.6px;background:#626262"></div>
<div class="a" style="left:1249.3px;top:433.0px;width:1px;height:1.6px;background:#626262"></div>
<div class="a" style="left:1269.8999999999999px;top:433.0px;width:1px;height:1.6px;background:#626262"></div>
<div class="a" style="left:1290.5px;top:433.0px;width:1px;height:1.6px;background:#626262"></div>
<div class="a" style="left:1311.1px;top:433.0px;width:1px;height:1.6px;background:#626262"></div>
<svg class="a" style="left:1192.7px;top:431.5px" width="12" height="12" viewBox="0 0 12 12"><path d="M6 0.8 L10.6 6.2 C10.8 9.6 8.6 11 6 11 C3.4 11 1.2 9.6 1.4 6.2Z" fill="#a4a4a4" stroke="#1a1a1a" stroke-width="1"/></svg>
<div class="t" style="left:1301px;width:60px;text-align:right;top:431.96px;font-size:9.6px;line-height:12.48px;color:#e0e0e0;font-weight:normal;text-shadow:0 1px 0 #2a2a2a">– 36</div>
<div class="t" style="left:1053.2px;width:80px;text-align:right;top:448.37px;font-size:8.2px;line-height:10.66px;color:#a8a8a8;font-weight:normal;text-shadow:0 1px 0 #2a2a2a">Shadows</div>
<div class="a" style="left:1141px;top:451.5px;width:175.5px;height:2.8px;background:linear-gradient(90deg,#262626,#5e5e5e);border-radius:1.5px;box-shadow:0 0 0 0.7px #222,0 1px 0 #5a5a5a"></div>
<div class="a" style="left:1146.3px;top:447.9px;width:1px;height:1.6px;background:#626262"></div>
<div class="a" style="left:1166.8999999999999px;top:447.9px;width:1px;height:1.6px;background:#626262"></div>
<div class="a" style="left:1187.5px;top:447.9px;width:1px;height:1.6px;background:#626262"></div>
<div class="a" style="left:1208.1px;top:447.9px;width:1px;height:1.6px;background:#626262"></div>
<div class="a" style="left:1228.7px;top:447.9px;width:1px;height:1.6px;background:#626262"></div>
<div class="a" style="left:1249.3px;top:447.9px;width:1px;height:1.6px;background:#626262"></div>
<div class="a" style="left:1269.8999999999999px;top:447.9px;width:1px;height:1.6px;background:#626262"></div>
<div class="a" style="left:1290.5px;top:447.9px;width:1px;height:1.6px;background:#626262"></div>
<div class="a" style="left:1311.1px;top:447.9px;width:1px;height:1.6px;background:#626262"></div>
<svg class="a" style="left:1246.2px;top:446.4px" width="12" height="12" viewBox="0 0 12 12"><path d="M6 0.8 L10.6 6.2 C10.8 9.6 8.6 11 6 11 C3.4 11 1.2 9.6 1.4 6.2Z" fill="#a4a4a4" stroke="#1a1a1a" stroke-width="1"/></svg>
<div class="t" style="left:1301px;width:60px;text-align:right;top:446.86px;font-size:9.6px;line-height:12.48px;color:#e0e0e0;font-weight:normal;text-shadow:0 1px 0 #2a2a2a">+ 29</div>
<div class="t" style="left:1053.2px;width:80px;text-align:right;top:463.87px;font-size:8.2px;line-height:10.66px;color:#a8a8a8;font-weight:normal;text-shadow:0 1px 0 #2a2a2a">Whites</div>
<div class="a" style="left:1141px;top:467.0px;width:175.5px;height:2.8px;background:linear-gradient(90deg,#262626,#5e5e5e);border-radius:1.5px;box-shadow:0 0 0 0.7px #222,0 1px 0 #5a5a5a"></div>
<div class="a" style="left:1146.3px;top:463.4px;width:1px;height:1.6px;background:#626262"></div>
<div class="a" style="left:1166.8999999999999px;top:463.4px;width:1px;height:1.6px;background:#626262"></div>
<div class="a" style="left:1187.5px;top:463.4px;width:1px;height:1.6px;background:#626262"></div>
<div class="a" style="left:1208.1px;top:463.4px;width:1px;height:1.6px;background:#626262"></div>
<div class="a" style="left:1228.7px;top:463.4px;width:1px;height:1.6px;background:#626262"></div>
<div class="a" style="left:1249.3px;top:463.4px;width:1px;height:1.6px;background:#626262"></div>
<div class="a" style="left:1269.8999999999999px;top:463.4px;width:1px;height:1.6px;background:#626262"></div>
<div class="a" style="left:1290.5px;top:463.4px;width:1px;height:1.6px;background:#626262"></div>
<div class="a" style="left:1311.1px;top:463.4px;width:1px;height:1.6px;background:#626262"></div>
<svg class="a" style="left:1185.5px;top:461.9px" width="12" height="12" viewBox="0 0 12 12"><path d="M6 0.8 L10.6 6.2 C10.8 9.6 8.6 11 6 11 C3.4 11 1.2 9.6 1.4 6.2Z" fill="#a4a4a4" stroke="#1a1a1a" stroke-width="1"/></svg>
<div class="t" style="left:1301px;width:60px;text-align:right;top:462.36px;font-size:9.6px;line-height:12.48px;color:#e0e0e0;font-weight:normal;text-shadow:0 1px 0 #2a2a2a">– 45</div>
<div class="t" style="left:1053.2px;width:80px;text-align:right;top:479.67px;font-size:8.2px;line-height:10.66px;color:#a8a8a8;font-weight:normal;text-shadow:0 1px 0 #2a2a2a">Blacks</div>
<div class="a" style="left:1141px;top:482.8px;width:175.5px;height:2.8px;background:linear-gradient(90deg,#262626,#5e5e5e);border-radius:1.5px;box-shadow:0 0 0 0.7px #222,0 1px 0 #5a5a5a"></div>
<div class="a" style="left:1146.3px;top:479.2px;width:1px;height:1.6px;background:#626262"></div>
<div class="a" style="left:1166.8999999999999px;top:479.2px;width:1px;height:1.6px;background:#626262"></div>
<div class="a" style="left:1187.5px;top:479.2px;width:1px;height:1.6px;background:#626262"></div>
<div class="a" style="left:1208.1px;top:479.2px;width:1px;height:1.6px;background:#626262"></div>
<div class="a" style="left:1228.7px;top:479.2px;width:1px;height:1.6px;background:#626262"></div>
<div class="a" style="left:1249.3px;top:479.2px;width:1px;height:1.6px;background:#626262"></div>
<div class="a" style="left:1269.8999999999999px;top:479.2px;width:1px;height:1.6px;background:#626262"></div>
<div class="a" style="left:1290.5px;top:479.2px;width:1px;height:1.6px;background:#626262"></div>
<div class="a" style="left:1311.1px;top:479.2px;width:1px;height:1.6px;background:#626262"></div>
<svg class="a" style="left:1226.7px;top:477.7px" width="12" height="12" viewBox="0 0 12 12"><path d="M6 0.8 L10.6 6.2 C10.8 9.6 8.6 11 6 11 C3.4 11 1.2 9.6 1.4 6.2Z" fill="#a4a4a4" stroke="#1a1a1a" stroke-width="1"/></svg>
<div class="t" style="left:1301px;width:60px;text-align:right;top:478.16px;font-size:9.6px;line-height:12.48px;color:#e0e0e0;font-weight:normal;text-shadow:0 1px 0 #2a2a2a">+ 5</div>
<div class="a" style="left:1079px;top:494.5px;width:294px;height:110px;background:#474747;border:1px solid #222"></div>
<div class="t" style="left:1141.8px;top:503.78px;font-size:8.8px;line-height:11.44px;color:#a8a8a8;font-weight:normal;">Presence</div>
<div class="t" style="left:1053.2px;width:80px;text-align:right;top:520.27px;font-size:8.2px;line-height:10.66px;color:#a8a8a8;font-weight:normal;text-shadow:0 1px 0 #2a2a2a">Texture</div>
<div class="a" style="left:1141px;top:523.4px;width:175.5px;height:2.8px;background:linear-gradient(90deg,#5e5e5e,#262626);border-radius:1.5px;box-shadow:0 0 0 0.7px #222,0 1px 0 #5a5a5a"></div>
<div class="a" style="left:1146.3px;top:519.8px;width:1px;height:1.6px;background:#626262"></div>
<div class="a" style="left:1166.8999999999999px;top:519.8px;width:1px;height:1.6px;background:#626262"></div>
<div class="a" style="left:1187.5px;top:519.8px;width:1px;height:1.6px;background:#626262"></div>
<div class="a" style="left:1208.1px;top:519.8px;width:1px;height:1.6px;background:#626262"></div>
<div class="a" style="left:1228.7px;top:519.8px;width:1px;height:1.6px;background:#626262"></div>
<div class="a" style="left:1249.3px;top:519.8px;width:1px;height:1.6px;background:#626262"></div>
<div class="a" style="left:1269.8999999999999px;top:519.8px;width:1px;height:1.6px;background:#626262"></div>
<div class="a" style="left:1290.5px;top:519.8px;width:1px;height:1.6px;background:#626262"></div>
<div class="a" style="left:1311.1px;top:519.8px;width:1px;height:1.6px;background:#626262"></div>
<svg class="a" style="left:1215.2px;top:518.3px" width="12" height="12" viewBox="0 0 12 12"><path d="M6 0.8 L10.6 6.2 C10.8 9.6 8.6 11 6 11 C3.4 11 1.2 9.6 1.4 6.2Z" fill="#a4a4a4" stroke="#1a1a1a" stroke-width="1"/></svg>
<div class="t" style="left:1301px;width:60px;text-align:right;top:518.76px;font-size:9.6px;line-height:12.48px;color:#e0e0e0;font-weight:normal;text-shadow:0 1px 0 #2a2a2a">– 9</div>
<div class="t" style="left:1053.2px;width:80px;text-align:right;top:535.77px;font-size:8.2px;line-height:10.66px;color:#a8a8a8;font-weight:normal;text-shadow:0 1px 0 #2a2a2a">Clarity</div>
<div class="a" style="left:1141px;top:538.9px;width:175.5px;height:2.8px;background:linear-gradient(90deg,#5e5e5e,#262626);border-radius:1.5px;box-shadow:0 0 0 0.7px #222,0 1px 0 #5a5a5a"></div>
<div class="a" style="left:1146.3px;top:535.3px;width:1px;height:1.6px;background:#626262"></div>
<div class="a" style="left:1166.8999999999999px;top:535.3px;width:1px;height:1.6px;background:#626262"></div>
<div class="a" style="left:1187.5px;top:535.3px;width:1px;height:1.6px;background:#626262"></div>
<div class="a" style="left:1208.1px;top:535.3px;width:1px;height:1.6px;background:#626262"></div>
<div class="a" style="left:1228.7px;top:535.3px;width:1px;height:1.6px;background:#626262"></div>
<div class="a" style="left:1249.3px;top:535.3px;width:1px;height:1.6px;background:#626262"></div>
<div class="a" style="left:1269.8999999999999px;top:535.3px;width:1px;height:1.6px;background:#626262"></div>
<div class="a" style="left:1290.5px;top:535.3px;width:1px;height:1.6px;background:#626262"></div>
<div class="a" style="left:1311.1px;top:535.3px;width:1px;height:1.6px;background:#626262"></div>
<svg class="a" style="left:1227.3px;top:533.8px" width="12" height="12" viewBox="0 0 12 12"><path d="M6 0.8 L10.6 6.2 C10.8 9.6 8.6 11 6 11 C3.4 11 1.2 9.6 1.4 6.2Z" fill="#a4a4a4" stroke="#1a1a1a" stroke-width="1"/></svg>
<div class="t" style="left:1301px;width:60px;text-align:right;top:534.26px;font-size:9.6px;line-height:12.48px;color:#e0e0e0;font-weight:normal;text-shadow:0 1px 0 #2a2a2a">+ 5</div>
<div class="t" style="left:1053.2px;width:80px;text-align:right;top:551.27px;font-size:8.2px;line-height:10.66px;color:#a8a8a8;font-weight:normal;text-shadow:0 1px 0 #2a2a2a">Dehaze</div>
<div class="a" style="left:1141px;top:554.4px;width:175.5px;height:2.8px;background:linear-gradient(90deg,#5e5e5e,#262626);border-radius:1.5px;box-shadow:0 0 0 0.7px #222,0 1px 0 #5a5a5a"></div>
<div class="a" style="left:1146.3px;top:550.8px;width:1px;height:1.6px;background:#626262"></div>
<div class="a" style="left:1166.8999999999999px;top:550.8px;width:1px;height:1.6px;background:#626262"></div>
<div class="a" style="left:1187.5px;top:550.8px;width:1px;height:1.6px;background:#626262"></div>
<div class="a" style="left:1208.1px;top:550.8px;width:1px;height:1.6px;background:#626262"></div>
<div class="a" style="left:1228.7px;top:550.8px;width:1px;height:1.6px;background:#626262"></div>
<div class="a" style="left:1249.3px;top:550.8px;width:1px;height:1.6px;background:#626262"></div>
<div class="a" style="left:1269.8999999999999px;top:550.8px;width:1px;height:1.6px;background:#626262"></div>
<div class="a" style="left:1290.5px;top:550.8px;width:1px;height:1.6px;background:#626262"></div>
<div class="a" style="left:1311.1px;top:550.8px;width:1px;height:1.6px;background:#626262"></div>
<svg class="a" style="left:1222.8px;top:549.3px" width="12" height="12" viewBox="0 0 12 12"><path d="M6 0.8 L10.6 6.2 C10.8 9.6 8.6 11 6 11 C3.4 11 1.2 9.6 1.4 6.2Z" fill="#a4a4a4" stroke="#1a1a1a" stroke-width="1"/></svg>
<div class="t" style="left:1301px;width:60px;text-align:right;top:549.76px;font-size:9.6px;line-height:12.48px;color:#8a8a8a;font-weight:normal;text-shadow:0 1px 0 #2a2a2a">0</div>
<div class="a" style="left:1080px;top:564px;width:292px;height:40px;background:#4a4a4a"></div>
<div class="t" style="left:1053.2px;width:80px;text-align:right;top:573.17px;font-size:8.2px;line-height:10.66px;color:#a8a8a8;font-weight:normal;text-shadow:0 1px 0 #2a2a2a">Vibrance</div>
<div class="a" style="left:1141px;top:576.3000000000001px;width:175.5px;height:2.8px;background:linear-gradient(90deg,#4a4a4a,#7a7a3a 40%,#4a9a3a 55%,#2a8aaa 68%,#5a3ac0 82%,#c02a3a);border-radius:1.5px;box-shadow:0 0 0 0.7px #222,0 1px 0 #5a5a5a"></div>
<div class="a" style="left:1146.3px;top:572.7px;width:1px;height:1.6px;background:#626262"></div>
<div class="a" style="left:1166.8999999999999px;top:572.7px;width:1px;height:1.6px;background:#626262"></div>
<div class="a" style="left:1187.5px;top:572.7px;width:1px;height:1.6px;background:#626262"></div>
<div class="a" style="left:1208.1px;top:572.7px;width:1px;height:1.6px;background:#626262"></div>
<div class="a" style="left:1228.7px;top:572.7px;width:1px;height:1.6px;background:#626262"></div>
<div class="a" style="left:1249.3px;top:572.7px;width:1px;height:1.6px;background:#626262"></div>
<div class="a" style="left:1269.8999999999999px;top:572.7px;width:1px;height:1.6px;background:#626262"></div>
<div class="a" style="left:1290.5px;top:572.7px;width:1px;height:1.6px;background:#626262"></div>
<div class="a" style="left:1311.1px;top:572.7px;width:1px;height:1.6px;background:#626262"></div>
<svg class="a" style="left:1222.8px;top:571.2px" width="12" height="12" viewBox="0 0 12 12"><path d="M6 0.8 L10.6 6.2 C10.8 9.6 8.6 11 6 11 C3.4 11 1.2 9.6 1.4 6.2Z" fill="#a4a4a4" stroke="#1a1a1a" stroke-width="1"/></svg>
<div class="t" style="left:1301px;width:60px;text-align:right;top:571.66px;font-size:9.6px;line-height:12.48px;color:#8a8a8a;font-weight:normal;text-shadow:0 1px 0 #2a2a2a">0</div>
<div class="t" style="left:1053.2px;width:80px;text-align:right;top:588.27px;font-size:8.2px;line-height:10.66px;color:#a8a8a8;font-weight:normal;text-shadow:0 1px 0 #2a2a2a">Saturation</div>
<div class="a" style="left:1141px;top:591.4px;width:175.5px;height:2.8px;background:linear-gradient(90deg,#4a4a4a,#8a8a40 40%,#4aaa3a 55%,#2a9ad0 68%,#6a3ad0 82%,#e02a3a);border-radius:1.5px;box-shadow:0 0 0 0.7px #222,0 1px 0 #5a5a5a"></div>
<div class="a" style="left:1146.3px;top:587.8px;width:1px;height:1.6px;background:#626262"></div>
<div class="a" style="left:1166.8999999999999px;top:587.8px;width:1px;height:1.6px;background:#626262"></div>
<div class="a" style="left:1187.5px;top:587.8px;width:1px;height:1.6px;background:#626262"></div>
<div class="a" style="left:1208.1px;top:587.8px;width:1px;height:1.6px;background:#626262"></div>
<div class="a" style="left:1228.7px;top:587.8px;width:1px;height:1.6px;background:#626262"></div>
<div class="a" style="left:1249.3px;top:587.8px;width:1px;height:1.6px;background:#626262"></div>
<div class="a" style="left:1269.8999999999999px;top:587.8px;width:1px;height:1.6px;background:#626262"></div>
<div class="a" style="left:1290.5px;top:587.8px;width:1px;height:1.6px;background:#626262"></div>
<div class="a" style="left:1311.1px;top:587.8px;width:1px;height:1.6px;background:#626262"></div>
<svg class="a" style="left:1222.8px;top:586.3px" width="12" height="12" viewBox="0 0 12 12"><path d="M6 0.8 L10.6 6.2 C10.8 9.6 8.6 11 6 11 C3.4 11 1.2 9.6 1.4 6.2Z" fill="#a4a4a4" stroke="#1a1a1a" stroke-width="1"/></svg>
<div class="t" style="left:1301px;width:60px;text-align:right;top:586.76px;font-size:9.6px;line-height:12.48px;color:#8a8a8a;font-weight:normal;text-shadow:0 1px 0 #2a2a2a">0</div>
<div class="a" style="left:1076px;top:604.5px;width:297px;height:23.5px;background:#2d2d2d"></div>
<div class="a" style="left:1080px;top:612px;width:5px;height:10px;background:#555;border:1px solid #222"></div>
<div class="t" style="left:1251.7px;width:100px;text-align:right;top:611.02px;font-size:11.5px;line-height:14.95px;color:#bcbcbc;font-weight:normal;">Tone Curve</div>
<svg class="a" style="left:1361px;top:614px" width="8" height="8"><path d="M0 0 L8 0 L4 7.5Z" fill="#c8c8c8"/></svg>
<div class="a" style="left:1079px;top:628px;width:294px;height:105px;background:#474747;border:1px solid #222"></div>
<svg class="a" style="left:1085px;top:638px" width="12" height="12"><circle cx="6" cy="6" r="4.5" fill="none" stroke="#222" stroke-width="1.2"/><circle cx="6" cy="6" r="1.5" fill="#222"/></svg>
<div class="t" style="left:1141.8px;top:638.45px;font-size:9.0px;line-height:11.7px;color:#a4a4a4;font-weight:normal;">Adjust :</div>
<svg class="a" style="left:1175px;top:636px" width="92" height="16" viewBox="0 0 92 16">
<circle cx="27.3" cy="8" r="6.2" fill="#d8d8d8"/><circle cx="27.3" cy="8" r="2" fill="#fff" stroke="#999" stroke-width="0.8"/>
<circle cx="45.6" cy="8" r="5.6" fill="none" stroke="#d02828" stroke-width="1.4"/>
<circle cx="64.5" cy="8" r="5.6" fill="none" stroke="#28b028" stroke-width="1.4"/>
<circle cx="83.4" cy="8" r="5.6" fill="none" stroke="#3070e0" stroke-width="1.4"/>
<path d="M3 14 C5 6 9 2 15 2 C10 5 8 10 6 14Z M6 14 C9 7 12 4 16 3" fill="none" stroke="#ccc" stroke-width="1"/>
</svg>
<div class="a" style="left:1140.7px;top:659px;width:170.5px;height:74px;background:#525252;border:1px solid #222;border-bottom:none;background-image:linear-gradient(90deg,rgba(0,0,0,.08) 1px,transparent 1px),linear-gradient(rgba(0,0,0,.08) 1px,transparent 1px);background-size:10.6px 10.6px"></div>
<svg class="a" style="left:1141px;top:659px" width="170" height="74" viewBox="0 0 170 74">
<path d="M72.7 74 C90 45 110 22 132 11.3 C145 6 158 3 169.8 0.8" fill="none" stroke="#eee" stroke-width="1.4"/>
<path d="M95.3 74 L170 0.8" fill="none" stroke="#222" stroke-width="1"/>
<circle cx="132" cy="11.3" r="2.6" fill="#111" stroke="#ddd" stroke-width="1"/>
<circle cx="169" cy="1.5" r="2.6" fill="#111" stroke="#ddd" stroke-width="1"/>
</svg>
<div class="a" style="left:1076px;top:733px;width:297px;height:37px;background:#2b2b2b"></div>
<svg class="a" style="left:1223px;top:734px" width="6" height="4"><path d="M0 0 L6 0 L3 4Z" fill="#777"/></svg>
<div class="a" style="left:1079.5px;top:740px;width:143.5px;height:22px;background:linear-gradient(#474747,#3c3c3c);border:1px solid #222;border-radius:2px"></div>
<div class="t" style="left:1079.5px;width:143px;text-align:center;top:743.98px;font-size:10.8px;line-height:14.04px;color:#c4c4c4;font-weight:normal;">Previous</div>
<div class="a" style="left:1228px;top:740px;width:143.7px;height:22px;background:linear-gradient(#474747,#3c3c3c);border:1px solid #222;border-radius:2px"></div>
<div class="t" style="left:1228.5px;width:143px;text-align:center;top:743.98px;font-size:10.8px;line-height:14.04px;color:#c4c4c4;font-weight:normal;">Reset</div>
<div class="a" style="left:1090.3px;top:777.5px;width:10.5px;height:10.5px;background:#4a1e1e"></div>
<div class="a" style="left:1104.1499999999999px;top:777.5px;width:10.5px;height:10.5px;background:#4a4a1e"></div>
<div class="a" style="left:1118.0px;top:777.5px;width:10.5px;height:10.5px;background:#1e3e1e"></div>
<div class="a" style="left:1131.85px;top:777.5px;width:10.5px;height:10.5px;background:#1e2e4a"></div>
<div class="a" style="left:1145.7px;top:777.5px;width:10.5px;height:10.5px;background:#2e1e4a"></div>
<div class="a" style="left:1159.55px;top:777.5px;width:10.5px;height:10.5px;background:#3e3e3e"></div>
<div class="a" style="left:1173.3999999999999px;top:777.5px;width:10.5px;height:10.5px;background:#2a2a2a"></div>
<div class="a" style="left:1081px;top:777px;width:1px;height:11px;border-left:1px dotted #444"></div>
<div class="a" style="left:1191px;top:777px;width:1px;height:11px;border-left:1px dotted #444"></div>
<div class="a" style="left:1246px;top:777px;width:1px;height:11px;border-left:1px dotted #444"></div>
<div class="a" style="left:1197.7px;top:776.5px;width:13.5px;height:11.5px;background:#7c7c7c;border:1px solid #9a9a9a"></div>
<div class="a" style="left:1200.7px;top:779.5px;width:7.5px;height:5.5px;border:1px solid #222"></div>
<div class="a" style="left:1211.8px;top:776.5px;width:13.5px;height:11.5px;background:#7c7c7c;border:1px solid #9a9a9a"></div>
<div class="a" style="left:1214.8px;top:779.5px;width:7.5px;height:5.5px;border:1px solid #222"></div>
<div class="a" style="left:1225.9px;top:776.5px;width:13.5px;height:11.5px;background:#7c7c7c;border:1px solid #9a9a9a"></div>
<div class="a" style="left:1228.9px;top:779.5px;width:7.5px;height:5.5px;border:1px solid #222"></div>
<div class="a" style="left:1254px;top:775px;width:117px;height:13px;background:#2e2e2e;border:1px solid #555;border-radius:2px"></div>
<div class="t" style="left:1262px;top:776.26px;font-size:9.6px;line-height:12.48px;color:#b8b8b8;font-weight:normal;">Filters Off</div>
<svg class="a" style="left:1362px;top:778px" width="5" height="9"><path d="M0 3.5 L2.5 0 L5 3.5Z M0 5.5 L2.5 9 L5 5.5Z" fill="#999"/></svg>
<div class="a" style="left:1380px;top:775px;width:11px;height:13px;background:#333;border:1px solid #666"></div>
<div class="a" style="left:260px;top:8px;width:813.5px;height:776px;background:#ececec;border-radius:10px;overflow:hidden;box-shadow:0 0 0 0.5px rgba(0,0,0,.5)">
<div class="a" style="left:0;top:0;width:814px;height:23.5px;background:#f7f2f0;border-bottom:1px solid #dcdcdc"></div>
</div>
<div class="a" style="left:267px;top:14px;width:10px;height:10px;border-radius:50%;background:#ee6b60"></div>
<div class="a" style="left:283px;top:14px;width:10px;height:10px;border-radius:50%;background:#dcd6d4"></div>
<div class="a" style="left:299px;top:14px;width:10px;height:10px;border-radius:50%;background:#44c23f"></div>
<div class="t" style="left:567.0px;width:200px;text-align:center;top:11.98px;font-size:10.8px;line-height:14.04px;color:#4d4d4d;font-weight:bold;">Export One File</div>
<div class="t" style="left:358.8px;width:80px;text-align:right;top:48.28px;font-size:11.1px;line-height:14.43px;color:#333;font-weight:normal;">Export To:</div>
<div class="a" style="left:447px;top:47px;width:81px;height:16px;background:#fff;border-radius:3.5px;box-shadow:0 0 0 0.5px rgba(0,0,0,.12),0 0.5px 1.5px rgba(0,0,0,.22)"></div>
<div class="t" style="left:453.8px;top:47.98px;font-size:10.8px;line-height:14.04px;color:#2e2e2e;font-weight:normal;">Hard Drive</div>
<div class="a" style="left:514px;top:49px;width:13.5px;height:12px;background:#3b82f6;border-radius:2.5px"></div>
<svg class="a" style="left:514px;top:49px" width="13.5" height="12" viewBox="0 0 10 10"><path d="M3 4 L5 2 L7 4 M3 6 L5 8 L7 6" fill="none" stroke="#fff" stroke-width="1.1"/></svg>
<div class="t" style="left:277px;top:72.32px;font-size:9.2px;line-height:11.96px;color:#a8a8a8;font-weight:normal;">Preset:</div>
<div class="t" style="left:447.6px;top:72.32px;font-size:9.2px;line-height:11.96px;color:#a8a8a8;font-weight:normal;">Export One File</div>
<div class="a" style="left:277px;top:87.5px;width:161.5px;height:585.5px;background:#fff"></div>
<svg class="a" style="left:284px;top:95.0px" width="8" height="5"><path d="M0.5 0.5 L4 4 L7.5 0.5" fill="none" stroke="#777" stroke-width="1"/></svg>
<div class="t" style="left:296.3px;top:90.12px;font-size:9.5px;line-height:12.35px;color:#3a3a3a;font-weight:normal;">Lightroom Presets</div>
<div class="a" style="left:298.4px;top:114.7px;width:10px;height:10px;background:#ececec;border-radius:2.5px;border:0.5px solid #e0e0e0"></div>
<div class="t" style="left:312.4px;top:111.35px;font-size:9.5px;line-height:12.35px;color:#333;font-weight:normal;">Burn Full-Sized JPEGs</div>
<div class="a" style="left:298.4px;top:135.84px;width:10px;height:10px;background:#fff;border:0.5px solid #c8c8c8;border-radius:2.5px;box-shadow:0 0.5px 0.5px rgba(0,0,0,0.15)"></div>
<div class="t" style="left:312.4px;top:132.47px;font-size:9.5px;line-height:12.35px;color:#333;font-weight:normal;">Export to DNG</div>
<div class="a" style="left:298.4px;top:157.0px;width:10px;height:10px;background:#ececec;border-radius:2.5px;border:0.5px solid #e0e0e0"></div>
<div class="t" style="left:312.4px;top:153.59px;font-size:9.5px;line-height:12.35px;color:#333;font-weight:normal;">For Email</div>
<div class="a" style="left:298.4px;top:178.08px;width:10px;height:10px;background:#fff;border:0.5px solid #c8c8c8;border-radius:2.5px;box-shadow:0 0.5px 0.5px rgba(0,0,0,0.15)"></div>
<div class="t" style="left:312.4px;top:174.71px;font-size:9.5px;line-height:12.35px;color:#333;font-weight:normal;">For Email (Hard Drive)</div>
<svg class="a" style="left:284px;top:200.60000000000002px" width="8" height="5"><path d="M0.5 0.5 L4 4 L7.5 0.5" fill="none" stroke="#777" stroke-width="1"/></svg>
<div class="t" style="left:296.3px;top:195.73px;font-size:9.5px;line-height:12.35px;color:#3a3a3a;font-weight:normal;">SLR Lounge Preset System</div>
<div class="a" style="left:298.4px;top:220.32000000000002px;width:10px;height:10px;background:#fff;border:0.5px solid #c8c8c8;border-radius:2.5px;box-shadow:0 0.5px 0.5px rgba(0,0,0,0.15)"></div>
<div class="t" style="left:312.4px;top:216.95px;font-size:9.5px;line-height:12.35px;color:#333;font-weight:normal;">01 Print</div>
<div class="a" style="left:298.4px;top:241.44000000000003px;width:10px;height:10px;background:#fff;border:0.5px solid #c8c8c8;border-radius:2.5px;box-shadow:0 0.5px 0.5px rgba(0,0,0,0.15)"></div>
<div class="t" style="left:312.4px;top:238.07px;font-size:9.5px;line-height:12.35px;color:#333;font-weight:normal;">02 Slideshow 4K</div>
<div class="a" style="left:298.4px;top:262.56000000000006px;width:10px;height:10px;background:#fff;border:0.5px solid #c8c8c8;border-radius:2.5px;box-shadow:0 0.5px 0.5px rgba(0,0,0,0.15)"></div>
<div class="t" style="left:312.4px;top:259.19px;font-size:9.5px;line-height:12.35px;color:#333;font-weight:normal;">03 Slideshow 1080p</div>
<div class="a" style="left:298.4px;top:283.68000000000006px;width:10px;height:10px;background:#fff;border:0.5px solid #c8c8c8;border-radius:2.5px;box-shadow:0 0.5px 0.5px rgba(0,0,0,0.15)"></div>
<div class="t" style="left:312.4px;top:280.31px;font-size:9.5px;line-height:12.35px;color:#333;font-weight:normal;">04 Web/Blog/Email</div>
<div class="a" style="left:298.4px;top:304.80000000000007px;width:10px;height:10px;background:#fff;border:0.5px solid #c8c8c8;border-radius:2.5px;box-shadow:0 0.5px 0.5px rgba(0,0,0,0.15)"></div>
<div class="t" style="left:312.4px;top:301.43px;font-size:9.5px;line-height:12.35px;color:#333;font-weight:normal;">05 Mixology Recipe</div>
<svg class="a" style="left:284px;top:327.32000000000005px" width="8" height="5"><path d="M0.5 0.5 L4 4 L7.5 0.5" fill="none" stroke="#777" stroke-width="1"/></svg>
<div class="t" style="left:296.3px;top:322.45px;font-size:9.5px;line-height:12.35px;color:#3a3a3a;font-weight:normal;">Visual Flow Presets</div>
<div class="a" style="left:277.3px;top:341.24000000000007px;width:161.2px;height:21.1px;background:#3a6cdc"></div>
<div class="a" style="left:298.4px;top:346.8px;width:10px;height:10px;background:#fff;border-radius:2.5px"></div>
<div class="t" style="left:312.4px;top:342.9px;width:126px;overflow:hidden;font-size:9.5px;line-height:13px;color:#fff">01 PRINT - Full-Res JPG 100%</div>
<div class="a" style="left:298.4px;top:368.1600000000001px;width:10px;height:10px;background:#fff;border:0.5px solid #c8c8c8;border-radius:2.5px;box-shadow:0 0.5px 0.5px rgba(0,0,0,0.15)"></div>
<div class="t" style="left:312.4px;top:364.79px;font-size:9.5px;line-height:12.35px;color:#333;font-weight:normal;">02 WEB - Facebook</div>
<div class="a" style="left:298.4px;top:389.2800000000001px;width:10px;height:10px;background:#fff;border:0.5px solid #c8c8c8;border-radius:2.5px;box-shadow:0 0.5px 0.5px rgba(0,0,0,0.15)"></div>
<div class="t" style="left:312.4px;top:385.91px;font-size:9.5px;line-height:12.35px;color:#333;font-weight:normal;">03 WEB - Instagram</div>
<div class="a" style="left:298.4px;top:410.4000000000001px;width:10px;height:10px;background:#fff;border:0.5px solid #c8c8c8;border-radius:2.5px;box-shadow:0 0.5px 0.5px rgba(0,0,0,0.15)"></div>
<div class="t" style="left:312.4px;top:407.03px;font-size:9.5px;line-height:12.35px;color:#333;font-weight:normal;">04 WEB - Blog</div>
<div class="a" style="left:298.4px;top:431.5200000000001px;width:10px;height:10px;background:#fff;border:0.5px solid #c8c8c8;border-radius:2.5px;box-shadow:0 0.5px 0.5px rgba(0,0,0,0.15)"></div>
<div class="t" style="left:312.4px;top:428.15px;font-size:9.5px;line-height:12.35px;color:#333;font-weight:normal;">05 DISPLAY - 4K</div>
<svg class="a" style="left:284px;top:454.0400000000001px" width="8" height="5"><path d="M0.5 0.5 L4 4 L7.5 0.5" fill="none" stroke="#777" stroke-width="1"/></svg>
<div class="t" style="left:296.3px;top:449.17px;font-size:9.5px;line-height:12.35px;color:#3a3a3a;font-weight:normal;">User Presets</div>
<div class="a" style="left:298.4px;top:473.7600000000001px;width:10px;height:10px;background:#fff;border:0.5px solid #c8c8c8;border-radius:2.5px;box-shadow:0 0.5px 0.5px rgba(0,0,0,0.15)"></div>
<div class="t" style="left:312.4px;top:470.39px;font-size:9.5px;line-height:12.35px;color:#333;font-weight:normal;">00_web</div>
<div class="a" style="left:276.5px;top:673px;width:162px;height:16.5px;background:linear-gradient(#fafafa,#f0f0f0);border:1px solid #bcbcbc"></div>
<div class="a" style="left:358px;top:673px;width:1px;height:16.5px;background:#bcbcbc"></div>
<div class="t" style="left:277.5px;width:80px;text-align:center;top:676.02px;font-size:9.2px;line-height:11.96px;color:#333;font-weight:normal;">Add</div>
<div class="t" style="left:358.3px;width:80px;text-align:center;top:676.02px;font-size:9.2px;line-height:11.96px;color:#333;font-weight:normal;">Remove</div>
<div class="a" style="left:447.6px;top:87.5px;width:485px;height:601.5px;background:#fff"></div>
<div class="a" style="left:921.5px;top:87.5px;width:11px;height:601.5px;background:#fafafa;border-left:1px solid #ececec"></div>
<div class="a" style="left:924.8px;top:91.4px;width:6.3px;height:594.7px;background:#c2c2c2;border-radius:3px"></div>
<div class="a" style="left:449.8px;top:87.7px;width:470px;height:18.599999999999994px;background:linear-gradient(#fafafa 0%,#f4f4f4 45%,#eaeaea 55%,#ededed 100%);border:1px solid #9e9e9e;box-shadow:inset 0 1px 0 #fff"></div>
<svg class="a" style="left:455px;top:93.4px" width="9" height="8"><path d="M0 0 L8.6 0 L4.3 7.4Z" fill="#6e6e6e"/></svg>
<div class="t" style="left:468.8px;top:90.98px;font-size:9.25px;line-height:12.03px;color:#1e1e1e;font-weight:bold;">Export Location</div>
<div class="t" style="left:460.29999999999995px;width:80px;text-align:right;top:115.83px;font-size:9.5px;line-height:12.35px;color:#3c3c3c;font-weight:normal;">Export To:</div>
<div class="a" style="left:545.5px;top:115.2px;width:192.5px;height:13.4px;background:#fff;border-radius:3.5px;box-shadow:0 0 0 0.5px rgba(0,0,0,.12),0 0.5px 1.5px rgba(0,0,0,.22)"></div>
<div class="t" style="left:550.9px;top:115.66px;font-size:9.6px;line-height:12.48px;color:#2e2e2e;font-weight:normal;">Specific folder</div>
<div class="a" style="left:726.5px;top:116.9px;width:10px;height:10px;background:#3b82f6;border-radius:2.5px"></div>
<svg class="a" style="left:726.5px;top:116.9px" width="10" height="10" viewBox="0 0 10 10"><path d="M3 4 L5 2 L7 4 M3 6 L5 8 L7 6" fill="none" stroke="#fff" stroke-width="1.1"/></svg>
<div class="t" style="left:460.29999999999995px;width:80px;text-align:right;top:136.39px;font-size:9.4px;line-height:12.22px;color:#3c3c3c;font-weight:normal;">Folder:</div>
<div class="t" style="left:544.9px;top:136.26px;font-size:9.6px;line-height:12.48px;color:#2e2e2e;font-weight:normal;">/Users/clin/Desktop</div>
<svg class="a" style="left:830px;top:139px" width="7" height="4"><path d="M0 0 L7 0 L3.5 4Z" fill="#555"/></svg>
<div class="a" style="left:840.6px;top:135.6px;width:57.6px;height:12.8px;background:#fff;border-radius:3px;box-shadow:0 0 0 0.5px rgba(0,0,0,.14),0 0.5px 1.2px rgba(0,0,0,.2)"></div>
<div class="t" style="left:839.4px;width:60px;text-align:center;top:135.89px;font-size:9.4px;line-height:12.22px;color:#2e2e2e;font-weight:normal;">Choose...</div>
<div class="a" style="left:543px;top:158.3px;width:10px;height:10px;background:#3b82f6;border-radius:2.5px"></div>
<svg class="a" style="left:543px;top:158.3px" width="10" height="10"><path d="M2.3 5.2 L4.2 7.3 L7.8 2.6" fill="none" stroke="#fff" stroke-width="1.4"/></svg>
<div class="t" style="left:556.6px;top:156.82px;font-size:9.5px;line-height:12.35px;color:#3c3c3c;font-weight:normal;">Put in Subfolder:</div>
<div class="a" style="left:637.8px;top:156.8px;width:262.6px;height:13.5px;background:#fff;box-shadow:0 0 0 0.5px rgba(0,0,0,.05),0 0.8px 0.6px rgba(0,0,0,.12)"></div>
<div class="t" style="left:640.8px;top:157.88px;font-size:9.5px;line-height:12.35px;color:#2e2e2e;font-weight:normal;">01-PRINT</div>
<div class="a" style="left:543px;top:177.8px;width:10px;height:10px;background:#fff;border:0.5px solid #c8c8c8;border-radius:2.5px;box-shadow:0 0.5px 0.5px rgba(0,0,0,0.15)"></div>
<div class="t" style="left:556.6px;top:176.22px;font-size:9.5px;line-height:12.35px;color:#3c3c3c;font-weight:normal;">Add to This Catalog</div>
<div class="a" style="left:677px;top:177.8px;width:10px;height:10px;background:#fff;border:0.5px solid #e4e4e4;border-radius:2.5px;box-shadow:0 0.5px 0.5px rgba(0,0,0,0.05)"></div>
<div class="t" style="left:690.8px;top:176.22px;font-size:9.5px;line-height:12.35px;color:#b9b9b9;font-weight:normal;">Add to Stack:</div>
<div class="a" style="left:758.9px;top:176.5px;width:88.2px;height:13px;background:#fff;border-radius:3px;box-shadow:0 0 0 0.5px rgba(0,0,0,.06),0 0.5px 1px rgba(0,0,0,.1)"></div>
<div class="t" style="left:764px;top:176.93px;font-size:9.35px;line-height:12.15px;color:#b9b9b9;font-weight:normal;">Below Original</div>
<svg class="a" style="left:838px;top:178px" width="6" height="10" viewBox="0 0 6 10"><path d="M1 4 L3 2 L5 4 M1 6 L3 8 L5 6" fill="none" stroke="#b0b0b0" stroke-width="1"/></svg>
<div class="t" style="left:440.29999999999995px;width:100px;text-align:right;top:198.62px;font-size:9.35px;line-height:12.15px;color:#3c3c3c;font-weight:normal;">Existing Files:</div>
<div class="a" style="left:545.5px;top:198.2px;width:199.1px;height:13.6px;background:#fff;border-radius:3.5px;box-shadow:0 0 0 0.5px rgba(0,0,0,.12),0 0.5px 1.5px rgba(0,0,0,.22)"></div>
<div class="t" style="left:550.9px;top:198.76px;font-size:9.6px;line-height:12.48px;color:#2e2e2e;font-weight:normal;">Ask what to do</div>
<div class="a" style="left:733.1px;top:200.0px;width:10px;height:10px;background:#3b82f6;border-radius:2.5px"></div>
<svg class="a" style="left:733.1px;top:200.0px" width="10" height="10" viewBox="0 0 10 10"><path d="M3 4 L5 2 L7 4 M3 6 L5 8 L7 6" fill="none" stroke="#fff" stroke-width="1.1"/></svg>
<div class="a" style="left:447.6px;top:219.3px;width:474px;height:1.5px;background:#cfcfcf"></div>
<div class="a" style="left:449.8px;top:221.8px;width:470px;height:18.399999999999977px;background:linear-gradient(#fafafa 0%,#f4f4f4 45%,#eaeaea 55%,#ededed 100%);border:1px solid #9e9e9e;box-shadow:inset 0 1px 0 #fff"></div>
<svg class="a" style="left:455.5px;top:226.7px" width="8" height="9"><path d="M0 0 L7.6 4.3 L0 8.6Z" fill="#6e6e6e"/></svg>
<div class="t" style="left:468.8px;top:224.99px;font-size:9.25px;line-height:12.03px;color:#1e1e1e;font-weight:bold;">File Naming</div>
<div class="t" style="left:809.3px;width:100px;text-align:right;top:225.87px;font-size:7.9px;line-height:10.27px;color:#333;font-weight:normal;">D09A4576.JPG</div>
<div class="a" style="left:447.6px;top:242.4px;width:474px;height:1.5px;background:#cfcfcf"></div>
<div class="a" style="left:449.8px;top:244.6px;width:470px;height:18.200000000000017px;background:linear-gradient(#fafafa 0%,#f4f4f4 45%,#eaeaea 55%,#ededed 100%);border:1px solid #9e9e9e;box-shadow:inset 0 1px 0 #fff"></div>
<svg class="a" style="left:455.5px;top:249.4px" width="8" height="9"><path d="M0 0 L7.6 4.3 L0 8.6Z" fill="#6e6e6e"/></svg>
<div class="t" style="left:468.8px;top:247.69px;font-size:9.25px;line-height:12.03px;color:#1e1e1e;font-weight:bold;">Video</div>
<div class="t" style="left:809.3px;width:100px;text-align:right;top:248.30px;font-size:8.3px;line-height:10.79px;color:#333;font-weight:normal;">No Video</div>
<div class="a" style="left:447.6px;top:265.1px;width:474px;height:1.5px;background:#cfcfcf"></div>
<div class="a" style="left:449.8px;top:267.5px;width:470px;height:18.100000000000023px;background:linear-gradient(#fafafa 0%,#f4f4f4 45%,#eaeaea 55%,#ededed 100%);border:1px solid #9e9e9e;box-shadow:inset 0 1px 0 #fff"></div>
<svg class="a" style="left:455px;top:272.9px" width="9" height="8"><path d="M0 0 L8.6 0 L4.3 7.4Z" fill="#6e6e6e"/></svg>
<div class="t" style="left:468.8px;top:270.54px;font-size:9.25px;line-height:12.03px;color:#1e1e1e;font-weight:bold;">File Settings</div>
<div class="t" style="left:440.29999999999995px;width:100px;text-align:right;top:296.62px;font-size:9.5px;line-height:12.35px;color:#3c3c3c;font-weight:normal;">Image Format:</div>
<div class="a" style="left:545.5px;top:295.7px;width:144.8px;height:13.9px;background:#fff;border-radius:3.5px;box-shadow:0 0 0 0.5px rgba(0,0,0,.12),0 0.5px 1.5px rgba(0,0,0,.22)"></div>
<div class="t" style="left:550.9px;top:296.41px;font-size:9.6px;line-height:12.48px;color:#2e2e2e;font-weight:normal;">JPEG</div>
<div class="a" style="left:678.8px;top:297.65px;width:10px;height:10px;background:#3b82f6;border-radius:2.5px"></div>
<svg class="a" style="left:678.8px;top:297.65px" width="10" height="10" viewBox="0 0 10 10"><path d="M3 4 L5 2 L7 4 M3 6 L5 8 L7 6" fill="none" stroke="#fff" stroke-width="1.1"/></svg>
<div class="t" style="left:684px;width:60px;text-align:right;top:296.62px;font-size:9.5px;line-height:12.35px;color:#3c3c3c;font-weight:normal;">Quality:</div>
<div class="a" style="left:752.4px;top:302.3px;width:94px;height:3px;background:#e6e6e6;border-radius:1px"></div>
<div class="a" style="left:752.4px;top:300.3px;width:1.2px;height:6.5px;background:#cdcdcd"></div>
<div class="a" style="left:760.6px;top:300.3px;width:1.2px;height:6.5px;background:#cdcdcd"></div>
<div class="a" style="left:768.8px;top:300.3px;width:1.2px;height:6.5px;background:#cdcdcd"></div>
<div class="a" style="left:777.0px;top:300.3px;width:1.2px;height:6.5px;background:#cdcdcd"></div>
<div class="a" style="left:785.1999999999999px;top:300.3px;width:1.2px;height:6.5px;background:#cdcdcd"></div>
<div class="a" style="left:793.4px;top:300.3px;width:1.2px;height:6.5px;background:#cdcdcd"></div>
<div class="a" style="left:801.6px;top:300.3px;width:1.2px;height:6.5px;background:#cdcdcd"></div>
<div class="a" style="left:809.8px;top:300.3px;width:1.2px;height:6.5px;background:#cdcdcd"></div>
<div class="a" style="left:818.0px;top:300.3px;width:1.2px;height:6.5px;background:#cdcdcd"></div>
<div class="a" style="left:826.1999999999999px;top:300.3px;width:1.2px;height:6.5px;background:#cdcdcd"></div>
<div class="a" style="left:834.4px;top:300.3px;width:1.2px;height:6.5px;background:#cdcdcd"></div>
<div class="a" style="left:842.5999999999999px;top:300.3px;width:1.2px;height:6.5px;background:#cdcdcd"></div>
<div class="a" style="left:847.1px;top:297.6px;width:8.4px;height:13.4px;background:#fff;border-radius:4.5px;box-shadow:0 0 0 0.5px rgba(0,0,0,.18),0 0.5px 1.5px rgba(0,0,0,.25)"></div>
<div class="a" style="left:861px;top:295.7px;width:41px;height:13.9px;background:#fff;box-shadow:0 0 0 0.5px rgba(0,0,0,.05),0 0.8px 0.6px rgba(0,0,0,.12)"></div>
<div class="t" style="left:858px;width:41px;text-align:right;top:296.97px;font-size:9.5px;line-height:12.35px;color:#2e2e2e;font-weight:normal;">100</div>
<div class="t" style="left:440.29999999999995px;width:100px;text-align:right;top:323.82px;font-size:9.5px;line-height:12.35px;color:#3c3c3c;font-weight:normal;">Color Space:</div>
<div class="a" style="left:545.5px;top:323.3px;width:144.8px;height:13.5px;background:#fff;border-radius:3.5px;box-shadow:0 0 0 0.5px rgba(0,0,0,.12),0 0.5px 1.5px rgba(0,0,0,.22)"></div>
<div class="t" style="left:550.9px;top:323.81px;font-size:9.6px;line-height:12.48px;color:#2e2e2e;font-weight:normal;">sRGB</div>
<div class="a" style="left:678.8px;top:325.05px;width:10px;height:10px;background:#3b82f6;border-radius:2.5px"></div>
<svg class="a" style="left:678.8px;top:325.05px" width="10" height="10" viewBox="0 0 10 10"><path d="M3 4 L5 2 L7 4 M3 6 L5 8 L7 6" fill="none" stroke="#fff" stroke-width="1.1"/></svg>
<div class="a" style="left:710px;top:325px;width:10px;height:10px;background:#fff;border:0.5px solid #c8c8c8;border-radius:2.5px;box-shadow:0 0.5px 0.5px rgba(0,0,0,0.15)"></div>
<div class="t" style="left:723px;top:323.89px;font-size:9.4px;line-height:12.22px;color:#3c3c3c;font-weight:normal;">Limit File Size To:</div>
<div class="a" style="left:804px;top:323.3px;width:41px;height:13.5px;background:#fff;box-shadow:0 0 0 0.5px rgba(0,0,0,.05),0 0.8px 0.6px rgba(0,0,0,.12)"></div>
<div class="t" style="left:807px;top:324.38px;font-size:9.5px;line-height:12.35px;color:#b9b9b9;font-weight:normal;">100</div>
<div class="t" style="left:848px;top:323.82px;font-size:9.5px;line-height:12.35px;color:#3c3c3c;font-weight:normal;">K</div>
<div class="a" style="left:447.6px;top:365.5px;width:474px;height:1.5px;background:#cfcfcf"></div>
<div class="a" style="left:449.8px;top:368.1px;width:470px;height:18.19999999999999px;background:linear-gradient(#fafafa 0%,#f4f4f4 45%,#eaeaea 55%,#ededed 100%);border:1px solid #9e9e9e;box-shadow:inset 0 1px 0 #fff"></div>
<svg class="a" style="left:455px;top:373.6px" width="9" height="8"><path d="M0 0 L8.6 0 L4.3 7.4Z" fill="#6e6e6e"/></svg>
<div class="t" style="left:468.8px;top:371.19px;font-size:9.25px;line-height:12.03px;color:#1e1e1e;font-weight:bold;">Image Sizing</div>
<div class="a" style="left:466.9px;top:397.5px;width:10px;height:10px;background:#fff;border:0.5px solid #c8c8c8;border-radius:2.5px;box-shadow:0 0.5px 0.5px rgba(0,0,0,0.15)"></div>
<div class="t" style="left:480px;top:395.89px;font-size:9.4px;line-height:12.22px;color:#3c3c3c;font-weight:normal;">Resize to Fit:</div>
<div class="a" style="left:545.5px;top:396px;width:160.9px;height:13.4px;background:#fff;border-radius:3px;box-shadow:0 0 0 0.5px rgba(0,0,0,.06),0 0.5px 1px rgba(0,0,0,.1)"></div>
<div class="t" style="left:550.9px;top:396.52px;font-size:9.5px;line-height:12.35px;color:#b9b9b9;font-weight:normal;">Width &amp; Height</div>
<svg class="a" style="left:698px;top:397.7px" width="6" height="10" viewBox="0 0 6 10"><path d="M1 4 L3 2 L5 4 M1 6 L3 8 L5 6" fill="none" stroke="#b0b0b0" stroke-width="1"/></svg>
<div class="a" style="left:718px;top:397.5px;width:10px;height:10px;background:#fff;border:0.5px solid #e4e4e4;border-radius:2.5px;box-shadow:0 0.5px 0.5px rgba(0,0,0,0.05)"></div>
<div class="t" style="left:731.4px;top:395.89px;font-size:9.4px;line-height:12.22px;color:#b9b9b9;font-weight:normal;">Don't Enlarge</div>
<div class="t" style="left:510.29999999999995px;width:30px;text-align:right;top:418.82px;font-size:9.5px;line-height:12.35px;color:#b9b9b9;font-weight:normal;">W:</div>
<div class="a" style="left:545.5px;top:418.7px;width:41.2px;height:13px;background:#fff;box-shadow:0 0 0 0.5px rgba(0,0,0,.05),0 0.8px 0.6px rgba(0,0,0,.12)"></div>
<div class="t" style="left:548.5px;top:419.52px;font-size:9.5px;line-height:12.35px;color:#b9b9b9;font-weight:normal;">1,000</div>
<div class="t" style="left:571px;width:30px;text-align:right;top:418.82px;font-size:9.5px;line-height:12.35px;color:#b9b9b9;font-weight:normal;">H:</div>
<div class="a" style="left:608.6px;top:418.7px;width:41.2px;height:13px;background:#fff;box-shadow:0 0 0 0.5px rgba(0,0,0,.05),0 0.8px 0.6px rgba(0,0,0,.12)"></div>
<div class="t" style="left:611.6px;top:419.52px;font-size:9.5px;line-height:12.35px;color:#b9b9b9;font-weight:normal;">1,000</div>
<div class="a" style="left:655.4px;top:418.7px;width:51px;height:13px;background:#fff;border-radius:3px;box-shadow:0 0 0 0.5px rgba(0,0,0,.06),0 0.5px 1px rgba(0,0,0,.1)"></div>
<div class="t" style="left:660.5px;top:419.12px;font-size:9.5px;line-height:12.35px;color:#b9b9b9;font-weight:normal;">pixels</div>
<svg class="a" style="left:698px;top:420.3px" width="6" height="10" viewBox="0 0 6 10"><path d="M1 4 L3 2 L5 4 M1 6 L3 8 L5 6" fill="none" stroke="#b0b0b0" stroke-width="1"/></svg>
<div class="t" style="left:689.1px;width:80px;text-align:right;top:418.86px;font-size:9.45px;line-height:12.29px;color:#3c3c3c;font-weight:normal;">Resolution:</div>
<div class="a" style="left:773.8px;top:418.7px;width:41.4px;height:13px;background:#fff;box-shadow:0 0 0 0.5px rgba(0,0,0,.05),0 0.8px 0.6px rgba(0,0,0,.12)"></div>
<div class="t" style="left:776.8px;top:419.52px;font-size:9.5px;line-height:12.35px;color:#2e2e2e;font-weight:normal;">240</div>
<div class="a" style="left:820.2px;top:418.7px;width:88.2px;height:13.2px;background:#fff;border-radius:3.5px;box-shadow:0 0 0 0.5px rgba(0,0,0,.12),0 0.5px 1.5px rgba(0,0,0,.22)"></div>
<div class="t" style="left:825.6px;top:419.06px;font-size:9.6px;line-height:12.48px;color:#2e2e2e;font-weight:normal;">pixels per inch</div>
<div class="a" style="left:896.9000000000001px;top:420.3px;width:10px;height:10px;background:#3b82f6;border-radius:2.5px"></div>
<svg class="a" style="left:896.9000000000001px;top:420.3px" width="10" height="10" viewBox="0 0 10 10"><path d="M3 4 L5 2 L7 4 M3 6 L5 8 L7 6" fill="none" stroke="#fff" stroke-width="1.1"/></svg>
<div class="a" style="left:447.6px;top:440.3px;width:474px;height:1.5px;background:#cfcfcf"></div>
<div class="a" style="left:449.8px;top:443.3px;width:470px;height:18.099999999999966px;background:linear-gradient(#fafafa 0%,#f4f4f4 45%,#eaeaea 55%,#ededed 100%);border:1px solid #9e9e9e;box-shadow:inset 0 1px 0 #fff"></div>
<svg class="a" style="left:455px;top:448.8px" width="9" height="8"><path d="M0 0 L8.6 0 L4.3 7.4Z" fill="#6e6e6e"/></svg>
<div class="t" style="left:468.8px;top:446.34px;font-size:9.25px;line-height:12.03px;color:#1e1e1e;font-weight:bold;">Output Sharpening</div>
<div class="a" style="left:466.9px;top:472.4px;width:10px;height:10px;background:#3b82f6;border-radius:2.5px"></div>
<svg class="a" style="left:466.9px;top:472.4px" width="10" height="10"><path d="M2.3 5.2 L4.2 7.3 L7.8 2.6" fill="none" stroke="#fff" stroke-width="1.4"/></svg>
<div class="t" style="left:480px;top:470.89px;font-size:9.4px;line-height:12.22px;color:#3c3c3c;font-weight:normal;">Sharpen For:</div>
<div class="a" style="left:545.5px;top:471px;width:144.8px;height:13px;background:#fff;border-radius:3.5px;box-shadow:0 0 0 0.5px rgba(0,0,0,.12),0 0.5px 1.5px rgba(0,0,0,.22)"></div>
<div class="t" style="left:550.9px;top:471.26px;font-size:9.6px;line-height:12.48px;color:#2e2e2e;font-weight:normal;">Glossy Paper</div>
<div class="a" style="left:678.8px;top:472.5px;width:10px;height:10px;background:#3b82f6;border-radius:2.5px"></div>
<svg class="a" style="left:678.8px;top:472.5px" width="10" height="10" viewBox="0 0 10 10"><path d="M3 4 L5 2 L7 4 M3 6 L5 8 L7 6" fill="none" stroke="#fff" stroke-width="1.1"/></svg>
<div class="t" style="left:688.3px;width:60px;text-align:right;top:470.89px;font-size:9.4px;line-height:12.22px;color:#3c3c3c;font-weight:normal;">Amount:</div>
<div class="a" style="left:753.9px;top:471px;width:144.3px;height:13px;background:#fff;border-radius:3.5px;box-shadow:0 0 0 0.5px rgba(0,0,0,.12),0 0.5px 1.5px rgba(0,0,0,.22)"></div>
<div class="t" style="left:759.3px;top:471.26px;font-size:9.6px;line-height:12.48px;color:#2e2e2e;font-weight:normal;">Standard</div>
<div class="a" style="left:886.7px;top:472.5px;width:10px;height:10px;background:#3b82f6;border-radius:2.5px"></div>
<svg class="a" style="left:886.7px;top:472.5px" width="10" height="10" viewBox="0 0 10 10"><path d="M3 4 L5 2 L7 4 M3 6 L5 8 L7 6" fill="none" stroke="#fff" stroke-width="1.1"/></svg>
<div class="a" style="left:447.6px;top:491.8px;width:474px;height:1.5px;background:#cfcfcf"></div>
<div class="a" style="left:449.8px;top:494.6px;width:470px;height:18.100000000000023px;background:linear-gradient(#fafafa 0%,#f4f4f4 45%,#eaeaea 55%,#ededed 100%);border:1px solid #9e9e9e;box-shadow:inset 0 1px 0 #fff"></div>
<svg class="a" style="left:455px;top:500.1px" width="9" height="8"><path d="M0 0 L8.6 0 L4.3 7.4Z" fill="#6e6e6e"/></svg>
<div class="t" style="left:468.8px;top:497.64px;font-size:9.25px;line-height:12.03px;color:#1e1e1e;font-weight:bold;">Metadata</div>
<div class="t" style="left:480.29999999999995px;width:60px;text-align:right;top:522.43px;font-size:9.5px;line-height:12.35px;color:#3c3c3c;font-weight:normal;">Include:</div>
<div class="a" style="left:545.5px;top:522px;width:190.2px;height:13.5px;background:#fff;border-radius:3.5px;box-shadow:0 0 0 0.5px rgba(0,0,0,.12),0 0.5px 1.5px rgba(0,0,0,.22)"></div>
<div class="t" style="left:550.9px;top:522.51px;font-size:9.6px;line-height:12.48px;color:#2e2e2e;font-weight:normal;">All Metadata</div>
<div class="a" style="left:724.2px;top:523.75px;width:10px;height:10px;background:#3b82f6;border-radius:2.5px"></div>
<svg class="a" style="left:724.2px;top:523.75px" width="10" height="10" viewBox="0 0 10 10"><path d="M3 4 L5 2 L7 4 M3 6 L5 8 L7 6" fill="none" stroke="#fff" stroke-width="1.1"/></svg>
<div class="a" style="left:543px;top:543.8px;width:10px;height:10px;background:#fff;border:0.5px solid #c8c8c8;border-radius:2.5px;box-shadow:0 0.5px 0.5px rgba(0,0,0,0.15)"></div>
<div class="t" style="left:556.6px;top:542.19px;font-size:9.4px;line-height:12.22px;color:#3c3c3c;font-weight:normal;">Remove Person Info</div>
<div class="a" style="left:649.8px;top:543.8px;width:10px;height:10px;background:#fff;border:0.5px solid #c8c8c8;border-radius:2.5px;box-shadow:0 0.5px 0.5px rgba(0,0,0,0.15)"></div>
<div class="t" style="left:662.8px;top:542.19px;font-size:9.4px;line-height:12.22px;color:#3c3c3c;font-weight:normal;">Remove Location Info</div>
<div class="a" style="left:543px;top:562.4px;width:10px;height:10px;background:#fff;border:0.5px solid #c8c8c8;border-radius:2.5px;box-shadow:0 0.5px 0.5px rgba(0,0,0,0.15)"></div>
<div class="t" style="left:556.6px;top:560.83px;font-size:9.5px;line-height:12.35px;color:#3c3c3c;font-weight:normal;">Write Keywords as Lightroom Hierarchy</div>
<div class="a" style="left:447.6px;top:588.5px;width:474px;height:1.5px;background:#cfcfcf"></div>
<div class="a" style="left:449.8px;top:591px;width:470px;height:18.399999999999977px;background:linear-gradient(#fafafa 0%,#f4f4f4 45%,#eaeaea 55%,#ededed 100%);border:1px solid #9e9e9e;box-shadow:inset 0 1px 0 #fff"></div>
<svg class="a" style="left:455.5px;top:595.9px" width="8" height="9"><path d="M0 0 L7.6 4.3 L0 8.6Z" fill="#6e6e6e"/></svg>
<div class="t" style="left:468.8px;top:594.19px;font-size:9.25px;line-height:12.03px;color:#1e1e1e;font-weight:bold;">Watermarking</div>
<div class="t" style="left:809.3px;width:100px;text-align:right;top:594.81px;font-size:8.3px;line-height:10.79px;color:#333;font-weight:normal;">No watermark</div>
<div class="a" style="left:447.6px;top:611.4px;width:474px;height:1.5px;background:#cfcfcf"></div>
<div class="a" style="left:449.8px;top:614px;width:470px;height:18.299999999999955px;background:linear-gradient(#fafafa 0%,#f4f4f4 45%,#eaeaea 55%,#ededed 100%);border:1px solid #9e9e9e;box-shadow:inset 0 1px 0 #fff"></div>
<svg class="a" style="left:455px;top:619.5px" width="9" height="8"><path d="M0 0 L8.6 0 L4.3 7.4Z" fill="#6e6e6e"/></svg>
<div class="t" style="left:468.8px;top:617.13px;font-size:9.25px;line-height:12.03px;color:#1e1e1e;font-weight:bold;">Post-Processing</div>
<div class="t" style="left:460.29999999999995px;width:80px;text-align:right;top:641.76px;font-size:9.6px;line-height:12.48px;color:#3c3c3c;font-weight:normal;">After Export:</div>
<div class="a" style="left:545.5px;top:641.6px;width:354.5px;height:13px;background:#fff;border-radius:3.5px;box-shadow:0 0 0 0.5px rgba(0,0,0,.12),0 0.5px 1.5px rgba(0,0,0,.22)"></div>
<div class="t" style="left:550.9px;top:641.86px;font-size:9.6px;line-height:12.48px;color:#2e2e2e;font-weight:normal;">Do nothing</div>
<div class="a" style="left:888.5px;top:643.1px;width:10px;height:10px;background:#3b82f6;border-radius:2.5px"></div>
<svg class="a" style="left:888.5px;top:643.1px" width="10" height="10" viewBox="0 0 10 10"><path d="M3 4 L5 2 L7 4 M3 6 L5 8 L7 6" fill="none" stroke="#fff" stroke-width="1.1"/></svg>
<div class="t" style="left:460.29999999999995px;width:80px;text-align:right;top:666.36px;font-size:9.6px;line-height:12.48px;color:#3c3c3c;font-weight:normal;">Application:</div>
<div class="t" style="left:544.9px;top:666.43px;font-size:9.5px;line-height:12.35px;color:#c4c4c4;font-weight:normal;">Choose an application...</div>
<svg class="a" style="left:830px;top:669.5px" width="7" height="4"><path d="M0 0 L7 0 L3.5 4Z" fill="#8a8a8a"/></svg>
<div class="a" style="left:840.6px;top:665.7px;width:57.6px;height:12.6px;background:#fff;border-radius:3px;box-shadow:0 0 0 0.5px rgba(0,0,0,.06),0 0.5px 1px rgba(0,0,0,.1)"></div>
<div class="t" style="left:839.4px;width:60px;text-align:center;top:665.89px;font-size:9.4px;line-height:12.22px;color:#b9b9b9;font-weight:normal;">Choose...</div>
<div class="a" style="left:277.3px;top:746px;width:106.6px;height:16.8px;background:#fff;border-radius:4px;box-shadow:0 0 0 0.5px rgba(0,0,0,.12),0 0.5px 1.5px rgba(0,0,0,.22)"></div>
<div class="t" style="left:277.3px;width:106.6px;text-align:center;top:747.22px;font-size:11.05px;line-height:14.37px;color:#333;font-weight:normal;">Plug-in Manager...</div>
<div class="a" style="left:815px;top:753px;width:63px;height:16px;background:#fff;border-radius:4px;box-shadow:0 0 0 0.5px rgba(0,0,0,.12),0 0.5px 1.5px rgba(0,0,0,.22)"></div>
<div class="t" style="left:815.0px;width:63px;text-align:center;top:754.04px;font-size:10.7px;line-height:13.91px;color:#333;font-weight:normal;">Done</div>
<div class="a" style="left:888px;top:753px;width:63px;height:16px;background:#fff;border-radius:4px;box-shadow:0 0 0 0.5px rgba(0,0,0,.12),0 0.5px 1.5px rgba(0,0,0,.22)"></div>
<div class="t" style="left:888.0px;width:63px;text-align:center;top:754.01px;font-size:10.75px;line-height:13.97px;color:#333;font-weight:normal;">Cancel</div>
<div class="a" style="left:961px;top:753px;width:95px;height:16px;background:linear-gradient(#4f8cf8,#3e7ef6);border-radius:4px;box-shadow:0 0.5px 1px rgba(0,0,0,.2)"></div>
<div class="t" style="left:961.0px;width:95px;text-align:center;top:753.85px;font-size:11.0px;line-height:14.3px;color:#fff;font-weight:normal;">Export</div>
</body></html>
